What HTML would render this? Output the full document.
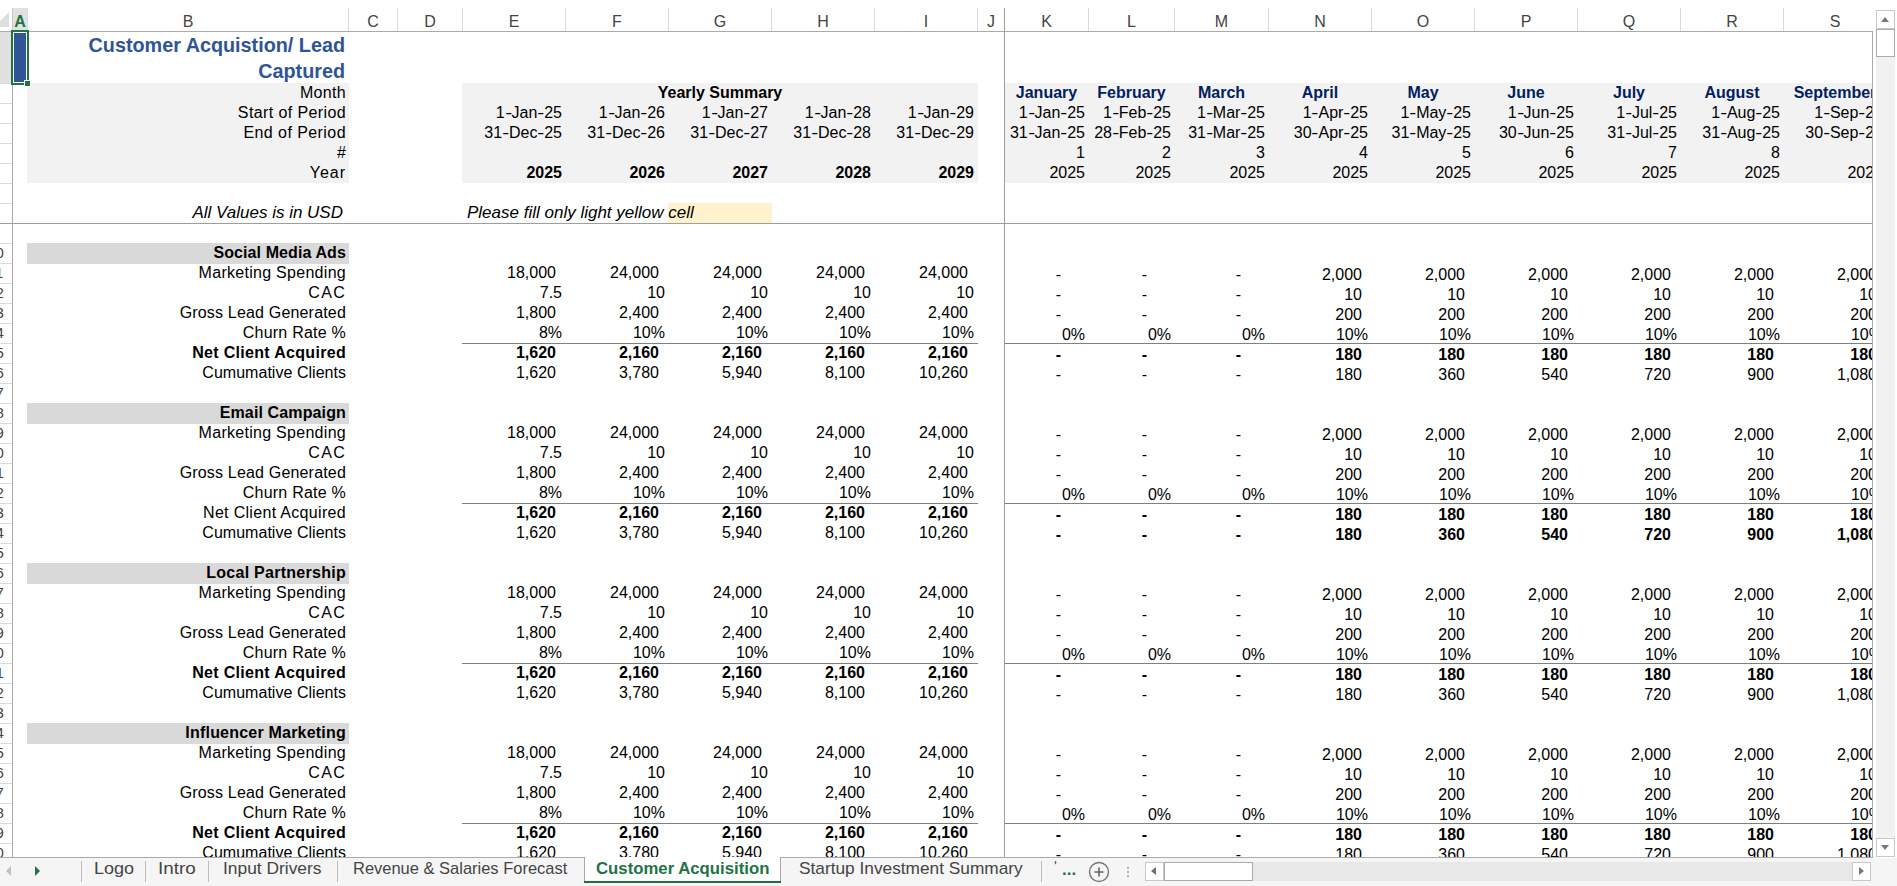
<!DOCTYPE html><html><head><meta charset="utf-8"><style>
html,body{margin:0;padding:0;}
body{width:1897px;height:886px;overflow:hidden;position:relative;background:#fff;font-family:"Liberation Sans", sans-serif;}
#grid{position:absolute;left:0;top:0;width:1872px;height:857px;overflow:hidden;}
</style></head><body><div id="grid">
<div style="position:absolute;left:27px;top:83px;width:322px;height:100px;background:#F2F2F2;"></div>
<div style="position:absolute;left:462px;top:83px;width:516px;height:100px;background:#F2F2F2;"></div>
<div style="position:absolute;left:1005px;top:83px;width:867px;height:100px;background:#F2F2F2;"></div>
<div style="position:absolute;left:27px;top:243px;width:322px;height:21px;background:#D9D9D9;"></div>
<div style="position:absolute;left:27px;top:403px;width:322px;height:21px;background:#D9D9D9;"></div>
<div style="position:absolute;left:27px;top:563px;width:322px;height:21px;background:#D9D9D9;"></div>
<div style="position:absolute;left:27px;top:723px;width:322px;height:21px;background:#D9D9D9;"></div>
<div style="position:absolute;left:668px;top:203px;width:104px;height:20px;background:#FFF2CC;"></div>
<div style="position:absolute;left:12px;top:31px;width:15px;height:52px;background:#2F5597;"></div>
<div style="position:absolute;left:27px;top:32px;width:321px;height:52px;text-align:right;padding-right:3px;box-sizing:border-box;font-size:19.8px;font-weight:bold;color:#2F5597;line-height:26px;">Customer Acquistion/ Lead<br>Captured</div>
<div style="position:absolute;left:-272px;top:83px;width:620px;height:20px;line-height:20px;text-align:right;padding-right:2px;box-sizing:border-box;font-size:16px;font-weight:normal;font-style:normal;color:#000;white-space:nowrap;letter-spacing:0.325px;">Month</div>
<div style="position:absolute;left:-272px;top:103px;width:620px;height:20px;line-height:20px;text-align:right;padding-right:2px;box-sizing:border-box;font-size:16px;font-weight:normal;font-style:normal;color:#000;white-space:nowrap;letter-spacing:0.393px;">Start of Period</div>
<div style="position:absolute;left:-272px;top:123px;width:620px;height:20px;line-height:20px;text-align:right;padding-right:2px;box-sizing:border-box;font-size:16px;font-weight:normal;font-style:normal;color:#000;white-space:nowrap;letter-spacing:0.433px;">End of Period</div>
<div style="position:absolute;left:-272px;top:143px;width:620px;height:20px;line-height:20px;text-align:right;padding-right:2px;box-sizing:border-box;font-size:16px;font-weight:normal;font-style:normal;color:#000;white-space:nowrap;letter-spacing:0px;">#</div>
<div style="position:absolute;left:-272px;top:163px;width:620px;height:20px;line-height:20px;text-align:right;padding-right:2px;box-sizing:border-box;font-size:16px;font-weight:normal;font-style:normal;color:#000;white-space:nowrap;letter-spacing:1.0px;">Year</div>
<div style="position:absolute;left:-273px;top:203px;width:621px;height:20px;line-height:20px;text-align:right;padding-right:5px;box-sizing:border-box;font-size:17px;font-weight:normal;font-style:italic;color:#000;white-space:nowrap;">All Values is in USD</div>
<div style="position:absolute;left:462px;top:83px;width:516px;height:20px;line-height:20px;text-align:center;box-sizing:border-box;font-size:16px;font-weight:bold;font-style:normal;color:#000;white-space:nowrap;">Yearly Summary</div>
<div style="position:absolute;left:163px;top:103px;width:402px;height:20px;line-height:20px;text-align:right;padding-right:3px;box-sizing:border-box;font-size:16px;font-weight:normal;font-style:normal;color:#000;white-space:nowrap;">1<span style="display:inline-block;width:6.83px;text-align:center"><span style="display:inline-block;transform:scaleX(1.3)">-</span></span>Jan<span style="display:inline-block;width:6.83px;text-align:center"><span style="display:inline-block;transform:scaleX(1.3)">-</span></span>25</div>
<div style="position:absolute;left:163px;top:123px;width:402px;height:20px;line-height:20px;text-align:right;padding-right:3px;box-sizing:border-box;font-size:16px;font-weight:normal;font-style:normal;color:#000;white-space:nowrap;">31<span style="display:inline-block;width:6.83px;text-align:center"><span style="display:inline-block;transform:scaleX(1.3)">-</span></span>Dec<span style="display:inline-block;width:6.83px;text-align:center"><span style="display:inline-block;transform:scaleX(1.3)">-</span></span>25</div>
<div style="position:absolute;left:163px;top:163px;width:402px;height:20px;line-height:20px;text-align:right;padding-right:3px;box-sizing:border-box;font-size:16px;font-weight:bold;font-style:normal;color:#000;white-space:nowrap;">2025</div>
<div style="position:absolute;left:266px;top:103px;width:402px;height:20px;line-height:20px;text-align:right;padding-right:3px;box-sizing:border-box;font-size:16px;font-weight:normal;font-style:normal;color:#000;white-space:nowrap;">1<span style="display:inline-block;width:6.83px;text-align:center"><span style="display:inline-block;transform:scaleX(1.3)">-</span></span>Jan<span style="display:inline-block;width:6.83px;text-align:center"><span style="display:inline-block;transform:scaleX(1.3)">-</span></span>26</div>
<div style="position:absolute;left:266px;top:123px;width:402px;height:20px;line-height:20px;text-align:right;padding-right:3px;box-sizing:border-box;font-size:16px;font-weight:normal;font-style:normal;color:#000;white-space:nowrap;">31<span style="display:inline-block;width:6.83px;text-align:center"><span style="display:inline-block;transform:scaleX(1.3)">-</span></span>Dec<span style="display:inline-block;width:6.83px;text-align:center"><span style="display:inline-block;transform:scaleX(1.3)">-</span></span>26</div>
<div style="position:absolute;left:266px;top:163px;width:402px;height:20px;line-height:20px;text-align:right;padding-right:3px;box-sizing:border-box;font-size:16px;font-weight:bold;font-style:normal;color:#000;white-space:nowrap;">2026</div>
<div style="position:absolute;left:369px;top:103px;width:402px;height:20px;line-height:20px;text-align:right;padding-right:3px;box-sizing:border-box;font-size:16px;font-weight:normal;font-style:normal;color:#000;white-space:nowrap;">1<span style="display:inline-block;width:6.83px;text-align:center"><span style="display:inline-block;transform:scaleX(1.3)">-</span></span>Jan<span style="display:inline-block;width:6.83px;text-align:center"><span style="display:inline-block;transform:scaleX(1.3)">-</span></span>27</div>
<div style="position:absolute;left:369px;top:123px;width:402px;height:20px;line-height:20px;text-align:right;padding-right:3px;box-sizing:border-box;font-size:16px;font-weight:normal;font-style:normal;color:#000;white-space:nowrap;">31<span style="display:inline-block;width:6.83px;text-align:center"><span style="display:inline-block;transform:scaleX(1.3)">-</span></span>Dec<span style="display:inline-block;width:6.83px;text-align:center"><span style="display:inline-block;transform:scaleX(1.3)">-</span></span>27</div>
<div style="position:absolute;left:369px;top:163px;width:402px;height:20px;line-height:20px;text-align:right;padding-right:3px;box-sizing:border-box;font-size:16px;font-weight:bold;font-style:normal;color:#000;white-space:nowrap;">2027</div>
<div style="position:absolute;left:472px;top:103px;width:402px;height:20px;line-height:20px;text-align:right;padding-right:3px;box-sizing:border-box;font-size:16px;font-weight:normal;font-style:normal;color:#000;white-space:nowrap;">1<span style="display:inline-block;width:6.83px;text-align:center"><span style="display:inline-block;transform:scaleX(1.3)">-</span></span>Jan<span style="display:inline-block;width:6.83px;text-align:center"><span style="display:inline-block;transform:scaleX(1.3)">-</span></span>28</div>
<div style="position:absolute;left:472px;top:123px;width:402px;height:20px;line-height:20px;text-align:right;padding-right:3px;box-sizing:border-box;font-size:16px;font-weight:normal;font-style:normal;color:#000;white-space:nowrap;">31<span style="display:inline-block;width:6.83px;text-align:center"><span style="display:inline-block;transform:scaleX(1.3)">-</span></span>Dec<span style="display:inline-block;width:6.83px;text-align:center"><span style="display:inline-block;transform:scaleX(1.3)">-</span></span>28</div>
<div style="position:absolute;left:472px;top:163px;width:402px;height:20px;line-height:20px;text-align:right;padding-right:3px;box-sizing:border-box;font-size:16px;font-weight:bold;font-style:normal;color:#000;white-space:nowrap;">2028</div>
<div style="position:absolute;left:575px;top:103px;width:402px;height:20px;line-height:20px;text-align:right;padding-right:3px;box-sizing:border-box;font-size:16px;font-weight:normal;font-style:normal;color:#000;white-space:nowrap;">1<span style="display:inline-block;width:6.83px;text-align:center"><span style="display:inline-block;transform:scaleX(1.3)">-</span></span>Jan<span style="display:inline-block;width:6.83px;text-align:center"><span style="display:inline-block;transform:scaleX(1.3)">-</span></span>29</div>
<div style="position:absolute;left:575px;top:123px;width:402px;height:20px;line-height:20px;text-align:right;padding-right:3px;box-sizing:border-box;font-size:16px;font-weight:normal;font-style:normal;color:#000;white-space:nowrap;">31<span style="display:inline-block;width:6.83px;text-align:center"><span style="display:inline-block;transform:scaleX(1.3)">-</span></span>Dec<span style="display:inline-block;width:6.83px;text-align:center"><span style="display:inline-block;transform:scaleX(1.3)">-</span></span>29</div>
<div style="position:absolute;left:575px;top:163px;width:402px;height:20px;line-height:20px;text-align:right;padding-right:3px;box-sizing:border-box;font-size:16px;font-weight:bold;font-style:normal;color:#000;white-space:nowrap;">2029</div>
<div style="position:absolute;left:463px;top:203px;width:400px;height:20px;line-height:20px;text-align:left;padding-left:4px;box-sizing:border-box;font-size:17px;font-weight:normal;font-style:italic;color:#000;white-space:nowrap;">Please fill only light yellow cell</div>
<div style="position:absolute;left:1005px;top:83px;width:83px;height:20px;line-height:20px;text-align:center;box-sizing:border-box;font-size:16px;font-weight:bold;font-style:normal;color:#002060;white-space:nowrap;">January</div>
<div style="position:absolute;left:705px;top:103px;width:383px;height:20px;line-height:20px;text-align:right;padding-right:3px;box-sizing:border-box;font-size:16px;font-weight:normal;font-style:normal;color:#000;white-space:nowrap;">1<span style="display:inline-block;width:6.83px;text-align:center"><span style="display:inline-block;transform:scaleX(1.3)">-</span></span>Jan<span style="display:inline-block;width:6.83px;text-align:center"><span style="display:inline-block;transform:scaleX(1.3)">-</span></span>25</div>
<div style="position:absolute;left:705px;top:123px;width:383px;height:20px;line-height:20px;text-align:right;padding-right:3px;box-sizing:border-box;font-size:16px;font-weight:normal;font-style:normal;color:#000;white-space:nowrap;">31<span style="display:inline-block;width:6.83px;text-align:center"><span style="display:inline-block;transform:scaleX(1.3)">-</span></span>Jan<span style="display:inline-block;width:6.83px;text-align:center"><span style="display:inline-block;transform:scaleX(1.3)">-</span></span>25</div>
<div style="position:absolute;left:705px;top:143px;width:383px;height:20px;line-height:20px;text-align:right;padding-right:3px;box-sizing:border-box;font-size:16px;font-weight:normal;font-style:normal;color:#000;white-space:nowrap;">1</div>
<div style="position:absolute;left:705px;top:163px;width:383px;height:20px;line-height:20px;text-align:right;padding-right:3px;box-sizing:border-box;font-size:16px;font-weight:normal;font-style:normal;color:#000;white-space:nowrap;">2025</div>
<div style="position:absolute;left:1089px;top:83px;width:85px;height:20px;line-height:20px;text-align:center;box-sizing:border-box;font-size:16px;font-weight:bold;font-style:normal;color:#002060;white-space:nowrap;">February</div>
<div style="position:absolute;left:789px;top:103px;width:385px;height:20px;line-height:20px;text-align:right;padding-right:3px;box-sizing:border-box;font-size:16px;font-weight:normal;font-style:normal;color:#000;white-space:nowrap;">1<span style="display:inline-block;width:6.83px;text-align:center"><span style="display:inline-block;transform:scaleX(1.3)">-</span></span>Feb<span style="display:inline-block;width:6.83px;text-align:center"><span style="display:inline-block;transform:scaleX(1.3)">-</span></span>25</div>
<div style="position:absolute;left:789px;top:123px;width:385px;height:20px;line-height:20px;text-align:right;padding-right:3px;box-sizing:border-box;font-size:16px;font-weight:normal;font-style:normal;color:#000;white-space:nowrap;">28<span style="display:inline-block;width:6.83px;text-align:center"><span style="display:inline-block;transform:scaleX(1.3)">-</span></span>Feb<span style="display:inline-block;width:6.83px;text-align:center"><span style="display:inline-block;transform:scaleX(1.3)">-</span></span>25</div>
<div style="position:absolute;left:789px;top:143px;width:385px;height:20px;line-height:20px;text-align:right;padding-right:3px;box-sizing:border-box;font-size:16px;font-weight:normal;font-style:normal;color:#000;white-space:nowrap;">2</div>
<div style="position:absolute;left:789px;top:163px;width:385px;height:20px;line-height:20px;text-align:right;padding-right:3px;box-sizing:border-box;font-size:16px;font-weight:normal;font-style:normal;color:#000;white-space:nowrap;">2025</div>
<div style="position:absolute;left:1175px;top:83px;width:93px;height:20px;line-height:20px;text-align:center;box-sizing:border-box;font-size:16px;font-weight:bold;font-style:normal;color:#002060;white-space:nowrap;">March</div>
<div style="position:absolute;left:875px;top:103px;width:393px;height:20px;line-height:20px;text-align:right;padding-right:3px;box-sizing:border-box;font-size:16px;font-weight:normal;font-style:normal;color:#000;white-space:nowrap;">1<span style="display:inline-block;width:6.83px;text-align:center"><span style="display:inline-block;transform:scaleX(1.3)">-</span></span>Mar<span style="display:inline-block;width:6.83px;text-align:center"><span style="display:inline-block;transform:scaleX(1.3)">-</span></span>25</div>
<div style="position:absolute;left:875px;top:123px;width:393px;height:20px;line-height:20px;text-align:right;padding-right:3px;box-sizing:border-box;font-size:16px;font-weight:normal;font-style:normal;color:#000;white-space:nowrap;">31<span style="display:inline-block;width:6.83px;text-align:center"><span style="display:inline-block;transform:scaleX(1.3)">-</span></span>Mar<span style="display:inline-block;width:6.83px;text-align:center"><span style="display:inline-block;transform:scaleX(1.3)">-</span></span>25</div>
<div style="position:absolute;left:875px;top:143px;width:393px;height:20px;line-height:20px;text-align:right;padding-right:3px;box-sizing:border-box;font-size:16px;font-weight:normal;font-style:normal;color:#000;white-space:nowrap;">3</div>
<div style="position:absolute;left:875px;top:163px;width:393px;height:20px;line-height:20px;text-align:right;padding-right:3px;box-sizing:border-box;font-size:16px;font-weight:normal;font-style:normal;color:#000;white-space:nowrap;">2025</div>
<div style="position:absolute;left:1269px;top:83px;width:102px;height:20px;line-height:20px;text-align:center;box-sizing:border-box;font-size:16px;font-weight:bold;font-style:normal;color:#002060;white-space:nowrap;">April</div>
<div style="position:absolute;left:969px;top:103px;width:402px;height:20px;line-height:20px;text-align:right;padding-right:3px;box-sizing:border-box;font-size:16px;font-weight:normal;font-style:normal;color:#000;white-space:nowrap;">1<span style="display:inline-block;width:6.83px;text-align:center"><span style="display:inline-block;transform:scaleX(1.3)">-</span></span>Apr<span style="display:inline-block;width:6.83px;text-align:center"><span style="display:inline-block;transform:scaleX(1.3)">-</span></span>25</div>
<div style="position:absolute;left:969px;top:123px;width:402px;height:20px;line-height:20px;text-align:right;padding-right:3px;box-sizing:border-box;font-size:16px;font-weight:normal;font-style:normal;color:#000;white-space:nowrap;">30<span style="display:inline-block;width:6.83px;text-align:center"><span style="display:inline-block;transform:scaleX(1.3)">-</span></span>Apr<span style="display:inline-block;width:6.83px;text-align:center"><span style="display:inline-block;transform:scaleX(1.3)">-</span></span>25</div>
<div style="position:absolute;left:969px;top:143px;width:402px;height:20px;line-height:20px;text-align:right;padding-right:3px;box-sizing:border-box;font-size:16px;font-weight:normal;font-style:normal;color:#000;white-space:nowrap;">4</div>
<div style="position:absolute;left:969px;top:163px;width:402px;height:20px;line-height:20px;text-align:right;padding-right:3px;box-sizing:border-box;font-size:16px;font-weight:normal;font-style:normal;color:#000;white-space:nowrap;">2025</div>
<div style="position:absolute;left:1372px;top:83px;width:102px;height:20px;line-height:20px;text-align:center;box-sizing:border-box;font-size:16px;font-weight:bold;font-style:normal;color:#002060;white-space:nowrap;">May</div>
<div style="position:absolute;left:1072px;top:103px;width:402px;height:20px;line-height:20px;text-align:right;padding-right:3px;box-sizing:border-box;font-size:16px;font-weight:normal;font-style:normal;color:#000;white-space:nowrap;">1<span style="display:inline-block;width:6.83px;text-align:center"><span style="display:inline-block;transform:scaleX(1.3)">-</span></span>May<span style="display:inline-block;width:6.83px;text-align:center"><span style="display:inline-block;transform:scaleX(1.3)">-</span></span>25</div>
<div style="position:absolute;left:1072px;top:123px;width:402px;height:20px;line-height:20px;text-align:right;padding-right:3px;box-sizing:border-box;font-size:16px;font-weight:normal;font-style:normal;color:#000;white-space:nowrap;">31<span style="display:inline-block;width:6.83px;text-align:center"><span style="display:inline-block;transform:scaleX(1.3)">-</span></span>May<span style="display:inline-block;width:6.83px;text-align:center"><span style="display:inline-block;transform:scaleX(1.3)">-</span></span>25</div>
<div style="position:absolute;left:1072px;top:143px;width:402px;height:20px;line-height:20px;text-align:right;padding-right:3px;box-sizing:border-box;font-size:16px;font-weight:normal;font-style:normal;color:#000;white-space:nowrap;">5</div>
<div style="position:absolute;left:1072px;top:163px;width:402px;height:20px;line-height:20px;text-align:right;padding-right:3px;box-sizing:border-box;font-size:16px;font-weight:normal;font-style:normal;color:#000;white-space:nowrap;">2025</div>
<div style="position:absolute;left:1475px;top:83px;width:102px;height:20px;line-height:20px;text-align:center;box-sizing:border-box;font-size:16px;font-weight:bold;font-style:normal;color:#002060;white-space:nowrap;">June</div>
<div style="position:absolute;left:1175px;top:103px;width:402px;height:20px;line-height:20px;text-align:right;padding-right:3px;box-sizing:border-box;font-size:16px;font-weight:normal;font-style:normal;color:#000;white-space:nowrap;">1<span style="display:inline-block;width:6.83px;text-align:center"><span style="display:inline-block;transform:scaleX(1.3)">-</span></span>Jun<span style="display:inline-block;width:6.83px;text-align:center"><span style="display:inline-block;transform:scaleX(1.3)">-</span></span>25</div>
<div style="position:absolute;left:1175px;top:123px;width:402px;height:20px;line-height:20px;text-align:right;padding-right:3px;box-sizing:border-box;font-size:16px;font-weight:normal;font-style:normal;color:#000;white-space:nowrap;">30<span style="display:inline-block;width:6.83px;text-align:center"><span style="display:inline-block;transform:scaleX(1.3)">-</span></span>Jun<span style="display:inline-block;width:6.83px;text-align:center"><span style="display:inline-block;transform:scaleX(1.3)">-</span></span>25</div>
<div style="position:absolute;left:1175px;top:143px;width:402px;height:20px;line-height:20px;text-align:right;padding-right:3px;box-sizing:border-box;font-size:16px;font-weight:normal;font-style:normal;color:#000;white-space:nowrap;">6</div>
<div style="position:absolute;left:1175px;top:163px;width:402px;height:20px;line-height:20px;text-align:right;padding-right:3px;box-sizing:border-box;font-size:16px;font-weight:normal;font-style:normal;color:#000;white-space:nowrap;">2025</div>
<div style="position:absolute;left:1578px;top:83px;width:102px;height:20px;line-height:20px;text-align:center;box-sizing:border-box;font-size:16px;font-weight:bold;font-style:normal;color:#002060;white-space:nowrap;">July</div>
<div style="position:absolute;left:1278px;top:103px;width:402px;height:20px;line-height:20px;text-align:right;padding-right:3px;box-sizing:border-box;font-size:16px;font-weight:normal;font-style:normal;color:#000;white-space:nowrap;">1<span style="display:inline-block;width:6.83px;text-align:center"><span style="display:inline-block;transform:scaleX(1.3)">-</span></span>Jul<span style="display:inline-block;width:6.83px;text-align:center"><span style="display:inline-block;transform:scaleX(1.3)">-</span></span>25</div>
<div style="position:absolute;left:1278px;top:123px;width:402px;height:20px;line-height:20px;text-align:right;padding-right:3px;box-sizing:border-box;font-size:16px;font-weight:normal;font-style:normal;color:#000;white-space:nowrap;">31<span style="display:inline-block;width:6.83px;text-align:center"><span style="display:inline-block;transform:scaleX(1.3)">-</span></span>Jul<span style="display:inline-block;width:6.83px;text-align:center"><span style="display:inline-block;transform:scaleX(1.3)">-</span></span>25</div>
<div style="position:absolute;left:1278px;top:143px;width:402px;height:20px;line-height:20px;text-align:right;padding-right:3px;box-sizing:border-box;font-size:16px;font-weight:normal;font-style:normal;color:#000;white-space:nowrap;">7</div>
<div style="position:absolute;left:1278px;top:163px;width:402px;height:20px;line-height:20px;text-align:right;padding-right:3px;box-sizing:border-box;font-size:16px;font-weight:normal;font-style:normal;color:#000;white-space:nowrap;">2025</div>
<div style="position:absolute;left:1681px;top:83px;width:102px;height:20px;line-height:20px;text-align:center;box-sizing:border-box;font-size:16px;font-weight:bold;font-style:normal;color:#002060;white-space:nowrap;">August</div>
<div style="position:absolute;left:1381px;top:103px;width:402px;height:20px;line-height:20px;text-align:right;padding-right:3px;box-sizing:border-box;font-size:16px;font-weight:normal;font-style:normal;color:#000;white-space:nowrap;">1<span style="display:inline-block;width:6.83px;text-align:center"><span style="display:inline-block;transform:scaleX(1.3)">-</span></span>Aug<span style="display:inline-block;width:6.83px;text-align:center"><span style="display:inline-block;transform:scaleX(1.3)">-</span></span>25</div>
<div style="position:absolute;left:1381px;top:123px;width:402px;height:20px;line-height:20px;text-align:right;padding-right:3px;box-sizing:border-box;font-size:16px;font-weight:normal;font-style:normal;color:#000;white-space:nowrap;">31<span style="display:inline-block;width:6.83px;text-align:center"><span style="display:inline-block;transform:scaleX(1.3)">-</span></span>Aug<span style="display:inline-block;width:6.83px;text-align:center"><span style="display:inline-block;transform:scaleX(1.3)">-</span></span>25</div>
<div style="position:absolute;left:1381px;top:143px;width:402px;height:20px;line-height:20px;text-align:right;padding-right:3px;box-sizing:border-box;font-size:16px;font-weight:normal;font-style:normal;color:#000;white-space:nowrap;">8</div>
<div style="position:absolute;left:1381px;top:163px;width:402px;height:20px;line-height:20px;text-align:right;padding-right:3px;box-sizing:border-box;font-size:16px;font-weight:normal;font-style:normal;color:#000;white-space:nowrap;">2025</div>
<div style="position:absolute;left:1784px;top:83px;width:102px;height:20px;line-height:20px;text-align:center;box-sizing:border-box;font-size:16px;font-weight:bold;font-style:normal;color:#002060;white-space:nowrap;">September</div>
<div style="position:absolute;left:1484px;top:103px;width:402px;height:20px;line-height:20px;text-align:right;padding-right:3px;box-sizing:border-box;font-size:16px;font-weight:normal;font-style:normal;color:#000;white-space:nowrap;">1<span style="display:inline-block;width:6.83px;text-align:center"><span style="display:inline-block;transform:scaleX(1.3)">-</span></span>Sep<span style="display:inline-block;width:6.83px;text-align:center"><span style="display:inline-block;transform:scaleX(1.3)">-</span></span>25</div>
<div style="position:absolute;left:1484px;top:123px;width:402px;height:20px;line-height:20px;text-align:right;padding-right:3px;box-sizing:border-box;font-size:16px;font-weight:normal;font-style:normal;color:#000;white-space:nowrap;">30<span style="display:inline-block;width:6.83px;text-align:center"><span style="display:inline-block;transform:scaleX(1.3)">-</span></span>Sep<span style="display:inline-block;width:6.83px;text-align:center"><span style="display:inline-block;transform:scaleX(1.3)">-</span></span>25</div>
<div style="position:absolute;left:1484px;top:143px;width:402px;height:20px;line-height:20px;text-align:right;padding-right:3px;box-sizing:border-box;font-size:16px;font-weight:normal;font-style:normal;color:#000;white-space:nowrap;">9</div>
<div style="position:absolute;left:1484px;top:163px;width:402px;height:20px;line-height:20px;text-align:right;padding-right:3px;box-sizing:border-box;font-size:16px;font-weight:normal;font-style:normal;color:#000;white-space:nowrap;">2025</div>
<div style="position:absolute;left:-272px;top:243px;width:620px;height:20px;line-height:20px;text-align:right;padding-right:2px;box-sizing:border-box;font-size:16px;font-weight:bold;font-style:normal;color:#000;white-space:nowrap;letter-spacing:0.1px;">Social Media Ads</div>
<div style="position:absolute;left:-272px;top:263px;width:620px;height:20px;line-height:20px;text-align:right;padding-right:2px;box-sizing:border-box;font-size:16px;font-weight:normal;font-style:normal;color:#000;white-space:nowrap;letter-spacing:0.282px;">Marketing Spending</div>
<div style="position:absolute;left:-272px;top:283px;width:620px;height:20px;line-height:20px;text-align:right;padding-right:2px;box-sizing:border-box;font-size:16px;font-weight:normal;font-style:normal;color:#000;white-space:nowrap;letter-spacing:1.3px;">CAC</div>
<div style="position:absolute;left:-272px;top:303px;width:620px;height:20px;line-height:20px;text-align:right;padding-right:2px;box-sizing:border-box;font-size:16px;font-weight:normal;font-style:normal;color:#000;white-space:nowrap;letter-spacing:0.179px;">Gross Lead Generated</div>
<div style="position:absolute;left:-272px;top:323px;width:620px;height:20px;line-height:20px;text-align:right;padding-right:2px;box-sizing:border-box;font-size:16px;font-weight:normal;font-style:normal;color:#000;white-space:nowrap;letter-spacing:0.227px;">Churn Rate %</div>
<div style="position:absolute;left:-272px;top:343px;width:620px;height:20px;line-height:20px;text-align:right;padding-right:2px;box-sizing:border-box;font-size:16px;font-weight:bold;font-style:normal;color:#000;white-space:nowrap;letter-spacing:0.311px;">Net Client Acquired</div>
<div style="position:absolute;left:-272px;top:363px;width:620px;height:20px;line-height:20px;text-align:right;padding-right:2px;box-sizing:border-box;font-size:16px;font-weight:normal;font-style:normal;color:#000;white-space:nowrap;letter-spacing:0.029px;">Cumumative Clients</div>
<div style="position:absolute;left:163px;top:263px;width:402px;height:20px;line-height:20px;text-align:right;padding-right:9px;box-sizing:border-box;font-size:16px;font-weight:normal;font-style:normal;color:#000;white-space:nowrap;">18,000</div>
<div style="position:absolute;left:163px;top:283px;width:402px;height:20px;line-height:20px;text-align:right;padding-right:3px;box-sizing:border-box;font-size:16px;font-weight:normal;font-style:normal;color:#000;white-space:nowrap;">7.5</div>
<div style="position:absolute;left:163px;top:303px;width:402px;height:20px;line-height:20px;text-align:right;padding-right:9px;box-sizing:border-box;font-size:16px;font-weight:normal;font-style:normal;color:#000;white-space:nowrap;">1,800</div>
<div style="position:absolute;left:163px;top:323px;width:402px;height:20px;line-height:20px;text-align:right;padding-right:3px;box-sizing:border-box;font-size:16px;font-weight:normal;font-style:normal;color:#000;white-space:nowrap;">8%</div>
<div style="position:absolute;left:163px;top:343px;width:402px;height:20px;line-height:20px;text-align:right;padding-right:9px;box-sizing:border-box;font-size:16px;font-weight:bold;font-style:normal;color:#000;white-space:nowrap;">1,620</div>
<div style="position:absolute;left:163px;top:363px;width:402px;height:20px;line-height:20px;text-align:right;padding-right:9px;box-sizing:border-box;font-size:16px;font-weight:normal;font-style:normal;color:#000;white-space:nowrap;">1,620</div>
<div style="position:absolute;left:266px;top:263px;width:402px;height:20px;line-height:20px;text-align:right;padding-right:9px;box-sizing:border-box;font-size:16px;font-weight:normal;font-style:normal;color:#000;white-space:nowrap;">24,000</div>
<div style="position:absolute;left:266px;top:283px;width:402px;height:20px;line-height:20px;text-align:right;padding-right:3px;box-sizing:border-box;font-size:16px;font-weight:normal;font-style:normal;color:#000;white-space:nowrap;">10</div>
<div style="position:absolute;left:266px;top:303px;width:402px;height:20px;line-height:20px;text-align:right;padding-right:9px;box-sizing:border-box;font-size:16px;font-weight:normal;font-style:normal;color:#000;white-space:nowrap;">2,400</div>
<div style="position:absolute;left:266px;top:323px;width:402px;height:20px;line-height:20px;text-align:right;padding-right:3px;box-sizing:border-box;font-size:16px;font-weight:normal;font-style:normal;color:#000;white-space:nowrap;">10%</div>
<div style="position:absolute;left:266px;top:343px;width:402px;height:20px;line-height:20px;text-align:right;padding-right:9px;box-sizing:border-box;font-size:16px;font-weight:bold;font-style:normal;color:#000;white-space:nowrap;">2,160</div>
<div style="position:absolute;left:266px;top:363px;width:402px;height:20px;line-height:20px;text-align:right;padding-right:9px;box-sizing:border-box;font-size:16px;font-weight:normal;font-style:normal;color:#000;white-space:nowrap;">3,780</div>
<div style="position:absolute;left:369px;top:263px;width:402px;height:20px;line-height:20px;text-align:right;padding-right:9px;box-sizing:border-box;font-size:16px;font-weight:normal;font-style:normal;color:#000;white-space:nowrap;">24,000</div>
<div style="position:absolute;left:369px;top:283px;width:402px;height:20px;line-height:20px;text-align:right;padding-right:3px;box-sizing:border-box;font-size:16px;font-weight:normal;font-style:normal;color:#000;white-space:nowrap;">10</div>
<div style="position:absolute;left:369px;top:303px;width:402px;height:20px;line-height:20px;text-align:right;padding-right:9px;box-sizing:border-box;font-size:16px;font-weight:normal;font-style:normal;color:#000;white-space:nowrap;">2,400</div>
<div style="position:absolute;left:369px;top:323px;width:402px;height:20px;line-height:20px;text-align:right;padding-right:3px;box-sizing:border-box;font-size:16px;font-weight:normal;font-style:normal;color:#000;white-space:nowrap;">10%</div>
<div style="position:absolute;left:369px;top:343px;width:402px;height:20px;line-height:20px;text-align:right;padding-right:9px;box-sizing:border-box;font-size:16px;font-weight:bold;font-style:normal;color:#000;white-space:nowrap;">2,160</div>
<div style="position:absolute;left:369px;top:363px;width:402px;height:20px;line-height:20px;text-align:right;padding-right:9px;box-sizing:border-box;font-size:16px;font-weight:normal;font-style:normal;color:#000;white-space:nowrap;">5,940</div>
<div style="position:absolute;left:472px;top:263px;width:402px;height:20px;line-height:20px;text-align:right;padding-right:9px;box-sizing:border-box;font-size:16px;font-weight:normal;font-style:normal;color:#000;white-space:nowrap;">24,000</div>
<div style="position:absolute;left:472px;top:283px;width:402px;height:20px;line-height:20px;text-align:right;padding-right:3px;box-sizing:border-box;font-size:16px;font-weight:normal;font-style:normal;color:#000;white-space:nowrap;">10</div>
<div style="position:absolute;left:472px;top:303px;width:402px;height:20px;line-height:20px;text-align:right;padding-right:9px;box-sizing:border-box;font-size:16px;font-weight:normal;font-style:normal;color:#000;white-space:nowrap;">2,400</div>
<div style="position:absolute;left:472px;top:323px;width:402px;height:20px;line-height:20px;text-align:right;padding-right:3px;box-sizing:border-box;font-size:16px;font-weight:normal;font-style:normal;color:#000;white-space:nowrap;">10%</div>
<div style="position:absolute;left:472px;top:343px;width:402px;height:20px;line-height:20px;text-align:right;padding-right:9px;box-sizing:border-box;font-size:16px;font-weight:bold;font-style:normal;color:#000;white-space:nowrap;">2,160</div>
<div style="position:absolute;left:472px;top:363px;width:402px;height:20px;line-height:20px;text-align:right;padding-right:9px;box-sizing:border-box;font-size:16px;font-weight:normal;font-style:normal;color:#000;white-space:nowrap;">8,100</div>
<div style="position:absolute;left:575px;top:263px;width:402px;height:20px;line-height:20px;text-align:right;padding-right:9px;box-sizing:border-box;font-size:16px;font-weight:normal;font-style:normal;color:#000;white-space:nowrap;">24,000</div>
<div style="position:absolute;left:575px;top:283px;width:402px;height:20px;line-height:20px;text-align:right;padding-right:3px;box-sizing:border-box;font-size:16px;font-weight:normal;font-style:normal;color:#000;white-space:nowrap;">10</div>
<div style="position:absolute;left:575px;top:303px;width:402px;height:20px;line-height:20px;text-align:right;padding-right:9px;box-sizing:border-box;font-size:16px;font-weight:normal;font-style:normal;color:#000;white-space:nowrap;">2,400</div>
<div style="position:absolute;left:575px;top:323px;width:402px;height:20px;line-height:20px;text-align:right;padding-right:3px;box-sizing:border-box;font-size:16px;font-weight:normal;font-style:normal;color:#000;white-space:nowrap;">10%</div>
<div style="position:absolute;left:575px;top:343px;width:402px;height:20px;line-height:20px;text-align:right;padding-right:9px;box-sizing:border-box;font-size:16px;font-weight:bold;font-style:normal;color:#000;white-space:nowrap;">2,160</div>
<div style="position:absolute;left:575px;top:363px;width:402px;height:20px;line-height:20px;text-align:right;padding-right:9px;box-sizing:border-box;font-size:16px;font-weight:normal;font-style:normal;color:#000;white-space:nowrap;">10,260</div>
<div style="position:absolute;left:462px;top:343px;width:516px;height:1px;background:#808080;"></div>
<div style="position:absolute;left:1005px;top:343px;width:867px;height:1px;background:#808080;"></div>
<div style="position:absolute;left:705px;top:265px;width:383px;height:20px;line-height:20px;text-align:right;padding-right:27px;box-sizing:border-box;font-size:16px;font-weight:normal;font-style:normal;color:#000;white-space:nowrap;">-</div>
<div style="position:absolute;left:705px;top:285px;width:383px;height:20px;line-height:20px;text-align:right;padding-right:27px;box-sizing:border-box;font-size:16px;font-weight:normal;font-style:normal;color:#000;white-space:nowrap;">-</div>
<div style="position:absolute;left:705px;top:305px;width:383px;height:20px;line-height:20px;text-align:right;padding-right:27px;box-sizing:border-box;font-size:16px;font-weight:normal;font-style:normal;color:#000;white-space:nowrap;">-</div>
<div style="position:absolute;left:705px;top:325px;width:383px;height:20px;line-height:20px;text-align:right;padding-right:3px;box-sizing:border-box;font-size:16px;font-weight:normal;font-style:normal;color:#000;white-space:nowrap;">0%</div>
<div style="position:absolute;left:705px;top:345px;width:383px;height:20px;line-height:20px;text-align:right;padding-right:27px;box-sizing:border-box;font-size:16px;font-weight:bold;font-style:normal;color:#000;white-space:nowrap;">-</div>
<div style="position:absolute;left:705px;top:365px;width:383px;height:20px;line-height:20px;text-align:right;padding-right:27px;box-sizing:border-box;font-size:16px;font-weight:normal;font-style:normal;color:#000;white-space:nowrap;">-</div>
<div style="position:absolute;left:789px;top:265px;width:385px;height:20px;line-height:20px;text-align:right;padding-right:27px;box-sizing:border-box;font-size:16px;font-weight:normal;font-style:normal;color:#000;white-space:nowrap;">-</div>
<div style="position:absolute;left:789px;top:285px;width:385px;height:20px;line-height:20px;text-align:right;padding-right:27px;box-sizing:border-box;font-size:16px;font-weight:normal;font-style:normal;color:#000;white-space:nowrap;">-</div>
<div style="position:absolute;left:789px;top:305px;width:385px;height:20px;line-height:20px;text-align:right;padding-right:27px;box-sizing:border-box;font-size:16px;font-weight:normal;font-style:normal;color:#000;white-space:nowrap;">-</div>
<div style="position:absolute;left:789px;top:325px;width:385px;height:20px;line-height:20px;text-align:right;padding-right:3px;box-sizing:border-box;font-size:16px;font-weight:normal;font-style:normal;color:#000;white-space:nowrap;">0%</div>
<div style="position:absolute;left:789px;top:345px;width:385px;height:20px;line-height:20px;text-align:right;padding-right:27px;box-sizing:border-box;font-size:16px;font-weight:bold;font-style:normal;color:#000;white-space:nowrap;">-</div>
<div style="position:absolute;left:789px;top:365px;width:385px;height:20px;line-height:20px;text-align:right;padding-right:27px;box-sizing:border-box;font-size:16px;font-weight:normal;font-style:normal;color:#000;white-space:nowrap;">-</div>
<div style="position:absolute;left:875px;top:265px;width:393px;height:20px;line-height:20px;text-align:right;padding-right:27px;box-sizing:border-box;font-size:16px;font-weight:normal;font-style:normal;color:#000;white-space:nowrap;">-</div>
<div style="position:absolute;left:875px;top:285px;width:393px;height:20px;line-height:20px;text-align:right;padding-right:27px;box-sizing:border-box;font-size:16px;font-weight:normal;font-style:normal;color:#000;white-space:nowrap;">-</div>
<div style="position:absolute;left:875px;top:305px;width:393px;height:20px;line-height:20px;text-align:right;padding-right:27px;box-sizing:border-box;font-size:16px;font-weight:normal;font-style:normal;color:#000;white-space:nowrap;">-</div>
<div style="position:absolute;left:875px;top:325px;width:393px;height:20px;line-height:20px;text-align:right;padding-right:3px;box-sizing:border-box;font-size:16px;font-weight:normal;font-style:normal;color:#000;white-space:nowrap;">0%</div>
<div style="position:absolute;left:875px;top:345px;width:393px;height:20px;line-height:20px;text-align:right;padding-right:27px;box-sizing:border-box;font-size:16px;font-weight:bold;font-style:normal;color:#000;white-space:nowrap;">-</div>
<div style="position:absolute;left:875px;top:365px;width:393px;height:20px;line-height:20px;text-align:right;padding-right:27px;box-sizing:border-box;font-size:16px;font-weight:normal;font-style:normal;color:#000;white-space:nowrap;">-</div>
<div style="position:absolute;left:969px;top:265px;width:402px;height:20px;line-height:20px;text-align:right;padding-right:9px;box-sizing:border-box;font-size:16px;font-weight:normal;font-style:normal;color:#000;white-space:nowrap;">2,000</div>
<div style="position:absolute;left:969px;top:285px;width:402px;height:20px;line-height:20px;text-align:right;padding-right:9px;box-sizing:border-box;font-size:16px;font-weight:normal;font-style:normal;color:#000;white-space:nowrap;">10</div>
<div style="position:absolute;left:969px;top:305px;width:402px;height:20px;line-height:20px;text-align:right;padding-right:9px;box-sizing:border-box;font-size:16px;font-weight:normal;font-style:normal;color:#000;white-space:nowrap;">200</div>
<div style="position:absolute;left:969px;top:325px;width:402px;height:20px;line-height:20px;text-align:right;padding-right:3px;box-sizing:border-box;font-size:16px;font-weight:normal;font-style:normal;color:#000;white-space:nowrap;">10%</div>
<div style="position:absolute;left:969px;top:345px;width:402px;height:20px;line-height:20px;text-align:right;padding-right:9px;box-sizing:border-box;font-size:16px;font-weight:bold;font-style:normal;color:#000;white-space:nowrap;">180</div>
<div style="position:absolute;left:969px;top:365px;width:402px;height:20px;line-height:20px;text-align:right;padding-right:9px;box-sizing:border-box;font-size:16px;font-weight:normal;font-style:normal;color:#000;white-space:nowrap;">180</div>
<div style="position:absolute;left:1072px;top:265px;width:402px;height:20px;line-height:20px;text-align:right;padding-right:9px;box-sizing:border-box;font-size:16px;font-weight:normal;font-style:normal;color:#000;white-space:nowrap;">2,000</div>
<div style="position:absolute;left:1072px;top:285px;width:402px;height:20px;line-height:20px;text-align:right;padding-right:9px;box-sizing:border-box;font-size:16px;font-weight:normal;font-style:normal;color:#000;white-space:nowrap;">10</div>
<div style="position:absolute;left:1072px;top:305px;width:402px;height:20px;line-height:20px;text-align:right;padding-right:9px;box-sizing:border-box;font-size:16px;font-weight:normal;font-style:normal;color:#000;white-space:nowrap;">200</div>
<div style="position:absolute;left:1072px;top:325px;width:402px;height:20px;line-height:20px;text-align:right;padding-right:3px;box-sizing:border-box;font-size:16px;font-weight:normal;font-style:normal;color:#000;white-space:nowrap;">10%</div>
<div style="position:absolute;left:1072px;top:345px;width:402px;height:20px;line-height:20px;text-align:right;padding-right:9px;box-sizing:border-box;font-size:16px;font-weight:bold;font-style:normal;color:#000;white-space:nowrap;">180</div>
<div style="position:absolute;left:1072px;top:365px;width:402px;height:20px;line-height:20px;text-align:right;padding-right:9px;box-sizing:border-box;font-size:16px;font-weight:normal;font-style:normal;color:#000;white-space:nowrap;">360</div>
<div style="position:absolute;left:1175px;top:265px;width:402px;height:20px;line-height:20px;text-align:right;padding-right:9px;box-sizing:border-box;font-size:16px;font-weight:normal;font-style:normal;color:#000;white-space:nowrap;">2,000</div>
<div style="position:absolute;left:1175px;top:285px;width:402px;height:20px;line-height:20px;text-align:right;padding-right:9px;box-sizing:border-box;font-size:16px;font-weight:normal;font-style:normal;color:#000;white-space:nowrap;">10</div>
<div style="position:absolute;left:1175px;top:305px;width:402px;height:20px;line-height:20px;text-align:right;padding-right:9px;box-sizing:border-box;font-size:16px;font-weight:normal;font-style:normal;color:#000;white-space:nowrap;">200</div>
<div style="position:absolute;left:1175px;top:325px;width:402px;height:20px;line-height:20px;text-align:right;padding-right:3px;box-sizing:border-box;font-size:16px;font-weight:normal;font-style:normal;color:#000;white-space:nowrap;">10%</div>
<div style="position:absolute;left:1175px;top:345px;width:402px;height:20px;line-height:20px;text-align:right;padding-right:9px;box-sizing:border-box;font-size:16px;font-weight:bold;font-style:normal;color:#000;white-space:nowrap;">180</div>
<div style="position:absolute;left:1175px;top:365px;width:402px;height:20px;line-height:20px;text-align:right;padding-right:9px;box-sizing:border-box;font-size:16px;font-weight:normal;font-style:normal;color:#000;white-space:nowrap;">540</div>
<div style="position:absolute;left:1278px;top:265px;width:402px;height:20px;line-height:20px;text-align:right;padding-right:9px;box-sizing:border-box;font-size:16px;font-weight:normal;font-style:normal;color:#000;white-space:nowrap;">2,000</div>
<div style="position:absolute;left:1278px;top:285px;width:402px;height:20px;line-height:20px;text-align:right;padding-right:9px;box-sizing:border-box;font-size:16px;font-weight:normal;font-style:normal;color:#000;white-space:nowrap;">10</div>
<div style="position:absolute;left:1278px;top:305px;width:402px;height:20px;line-height:20px;text-align:right;padding-right:9px;box-sizing:border-box;font-size:16px;font-weight:normal;font-style:normal;color:#000;white-space:nowrap;">200</div>
<div style="position:absolute;left:1278px;top:325px;width:402px;height:20px;line-height:20px;text-align:right;padding-right:3px;box-sizing:border-box;font-size:16px;font-weight:normal;font-style:normal;color:#000;white-space:nowrap;">10%</div>
<div style="position:absolute;left:1278px;top:345px;width:402px;height:20px;line-height:20px;text-align:right;padding-right:9px;box-sizing:border-box;font-size:16px;font-weight:bold;font-style:normal;color:#000;white-space:nowrap;">180</div>
<div style="position:absolute;left:1278px;top:365px;width:402px;height:20px;line-height:20px;text-align:right;padding-right:9px;box-sizing:border-box;font-size:16px;font-weight:normal;font-style:normal;color:#000;white-space:nowrap;">720</div>
<div style="position:absolute;left:1381px;top:265px;width:402px;height:20px;line-height:20px;text-align:right;padding-right:9px;box-sizing:border-box;font-size:16px;font-weight:normal;font-style:normal;color:#000;white-space:nowrap;">2,000</div>
<div style="position:absolute;left:1381px;top:285px;width:402px;height:20px;line-height:20px;text-align:right;padding-right:9px;box-sizing:border-box;font-size:16px;font-weight:normal;font-style:normal;color:#000;white-space:nowrap;">10</div>
<div style="position:absolute;left:1381px;top:305px;width:402px;height:20px;line-height:20px;text-align:right;padding-right:9px;box-sizing:border-box;font-size:16px;font-weight:normal;font-style:normal;color:#000;white-space:nowrap;">200</div>
<div style="position:absolute;left:1381px;top:325px;width:402px;height:20px;line-height:20px;text-align:right;padding-right:3px;box-sizing:border-box;font-size:16px;font-weight:normal;font-style:normal;color:#000;white-space:nowrap;">10%</div>
<div style="position:absolute;left:1381px;top:345px;width:402px;height:20px;line-height:20px;text-align:right;padding-right:9px;box-sizing:border-box;font-size:16px;font-weight:bold;font-style:normal;color:#000;white-space:nowrap;">180</div>
<div style="position:absolute;left:1381px;top:365px;width:402px;height:20px;line-height:20px;text-align:right;padding-right:9px;box-sizing:border-box;font-size:16px;font-weight:normal;font-style:normal;color:#000;white-space:nowrap;">900</div>
<div style="position:absolute;left:1484px;top:265px;width:402px;height:20px;line-height:20px;text-align:right;padding-right:9px;box-sizing:border-box;font-size:16px;font-weight:normal;font-style:normal;color:#000;white-space:nowrap;">2,000</div>
<div style="position:absolute;left:1484px;top:285px;width:402px;height:20px;line-height:20px;text-align:right;padding-right:9px;box-sizing:border-box;font-size:16px;font-weight:normal;font-style:normal;color:#000;white-space:nowrap;">10</div>
<div style="position:absolute;left:1484px;top:305px;width:402px;height:20px;line-height:20px;text-align:right;padding-right:9px;box-sizing:border-box;font-size:16px;font-weight:normal;font-style:normal;color:#000;white-space:nowrap;">200</div>
<div style="position:absolute;left:1484px;top:325px;width:402px;height:20px;line-height:20px;text-align:right;padding-right:3px;box-sizing:border-box;font-size:16px;font-weight:normal;font-style:normal;color:#000;white-space:nowrap;">10%</div>
<div style="position:absolute;left:1484px;top:345px;width:402px;height:20px;line-height:20px;text-align:right;padding-right:9px;box-sizing:border-box;font-size:16px;font-weight:bold;font-style:normal;color:#000;white-space:nowrap;">180</div>
<div style="position:absolute;left:1484px;top:365px;width:402px;height:20px;line-height:20px;text-align:right;padding-right:9px;box-sizing:border-box;font-size:16px;font-weight:normal;font-style:normal;color:#000;white-space:nowrap;">1,080</div>
<div style="position:absolute;left:-272px;top:403px;width:620px;height:20px;line-height:20px;text-align:right;padding-right:2px;box-sizing:border-box;font-size:16px;font-weight:bold;font-style:normal;color:#000;white-space:nowrap;letter-spacing:0.131px;">Email Campaign</div>
<div style="position:absolute;left:-272px;top:423px;width:620px;height:20px;line-height:20px;text-align:right;padding-right:2px;box-sizing:border-box;font-size:16px;font-weight:normal;font-style:normal;color:#000;white-space:nowrap;letter-spacing:0.282px;">Marketing Spending</div>
<div style="position:absolute;left:-272px;top:443px;width:620px;height:20px;line-height:20px;text-align:right;padding-right:2px;box-sizing:border-box;font-size:16px;font-weight:normal;font-style:normal;color:#000;white-space:nowrap;letter-spacing:1.3px;">CAC</div>
<div style="position:absolute;left:-272px;top:463px;width:620px;height:20px;line-height:20px;text-align:right;padding-right:2px;box-sizing:border-box;font-size:16px;font-weight:normal;font-style:normal;color:#000;white-space:nowrap;letter-spacing:0.179px;">Gross Lead Generated</div>
<div style="position:absolute;left:-272px;top:483px;width:620px;height:20px;line-height:20px;text-align:right;padding-right:2px;box-sizing:border-box;font-size:16px;font-weight:normal;font-style:normal;color:#000;white-space:nowrap;letter-spacing:0.227px;">Churn Rate %</div>
<div style="position:absolute;left:-272px;top:503px;width:620px;height:20px;line-height:20px;text-align:right;padding-right:2px;box-sizing:border-box;font-size:16px;font-weight:normal;font-style:normal;color:#000;white-space:nowrap;letter-spacing:0.317px;">Net Client Acquired</div>
<div style="position:absolute;left:-272px;top:523px;width:620px;height:20px;line-height:20px;text-align:right;padding-right:2px;box-sizing:border-box;font-size:16px;font-weight:normal;font-style:normal;color:#000;white-space:nowrap;letter-spacing:0.029px;">Cumumative Clients</div>
<div style="position:absolute;left:163px;top:423px;width:402px;height:20px;line-height:20px;text-align:right;padding-right:9px;box-sizing:border-box;font-size:16px;font-weight:normal;font-style:normal;color:#000;white-space:nowrap;">18,000</div>
<div style="position:absolute;left:163px;top:443px;width:402px;height:20px;line-height:20px;text-align:right;padding-right:3px;box-sizing:border-box;font-size:16px;font-weight:normal;font-style:normal;color:#000;white-space:nowrap;">7.5</div>
<div style="position:absolute;left:163px;top:463px;width:402px;height:20px;line-height:20px;text-align:right;padding-right:9px;box-sizing:border-box;font-size:16px;font-weight:normal;font-style:normal;color:#000;white-space:nowrap;">1,800</div>
<div style="position:absolute;left:163px;top:483px;width:402px;height:20px;line-height:20px;text-align:right;padding-right:3px;box-sizing:border-box;font-size:16px;font-weight:normal;font-style:normal;color:#000;white-space:nowrap;">8%</div>
<div style="position:absolute;left:163px;top:503px;width:402px;height:20px;line-height:20px;text-align:right;padding-right:9px;box-sizing:border-box;font-size:16px;font-weight:bold;font-style:normal;color:#000;white-space:nowrap;">1,620</div>
<div style="position:absolute;left:163px;top:523px;width:402px;height:20px;line-height:20px;text-align:right;padding-right:9px;box-sizing:border-box;font-size:16px;font-weight:normal;font-style:normal;color:#000;white-space:nowrap;">1,620</div>
<div style="position:absolute;left:266px;top:423px;width:402px;height:20px;line-height:20px;text-align:right;padding-right:9px;box-sizing:border-box;font-size:16px;font-weight:normal;font-style:normal;color:#000;white-space:nowrap;">24,000</div>
<div style="position:absolute;left:266px;top:443px;width:402px;height:20px;line-height:20px;text-align:right;padding-right:3px;box-sizing:border-box;font-size:16px;font-weight:normal;font-style:normal;color:#000;white-space:nowrap;">10</div>
<div style="position:absolute;left:266px;top:463px;width:402px;height:20px;line-height:20px;text-align:right;padding-right:9px;box-sizing:border-box;font-size:16px;font-weight:normal;font-style:normal;color:#000;white-space:nowrap;">2,400</div>
<div style="position:absolute;left:266px;top:483px;width:402px;height:20px;line-height:20px;text-align:right;padding-right:3px;box-sizing:border-box;font-size:16px;font-weight:normal;font-style:normal;color:#000;white-space:nowrap;">10%</div>
<div style="position:absolute;left:266px;top:503px;width:402px;height:20px;line-height:20px;text-align:right;padding-right:9px;box-sizing:border-box;font-size:16px;font-weight:bold;font-style:normal;color:#000;white-space:nowrap;">2,160</div>
<div style="position:absolute;left:266px;top:523px;width:402px;height:20px;line-height:20px;text-align:right;padding-right:9px;box-sizing:border-box;font-size:16px;font-weight:normal;font-style:normal;color:#000;white-space:nowrap;">3,780</div>
<div style="position:absolute;left:369px;top:423px;width:402px;height:20px;line-height:20px;text-align:right;padding-right:9px;box-sizing:border-box;font-size:16px;font-weight:normal;font-style:normal;color:#000;white-space:nowrap;">24,000</div>
<div style="position:absolute;left:369px;top:443px;width:402px;height:20px;line-height:20px;text-align:right;padding-right:3px;box-sizing:border-box;font-size:16px;font-weight:normal;font-style:normal;color:#000;white-space:nowrap;">10</div>
<div style="position:absolute;left:369px;top:463px;width:402px;height:20px;line-height:20px;text-align:right;padding-right:9px;box-sizing:border-box;font-size:16px;font-weight:normal;font-style:normal;color:#000;white-space:nowrap;">2,400</div>
<div style="position:absolute;left:369px;top:483px;width:402px;height:20px;line-height:20px;text-align:right;padding-right:3px;box-sizing:border-box;font-size:16px;font-weight:normal;font-style:normal;color:#000;white-space:nowrap;">10%</div>
<div style="position:absolute;left:369px;top:503px;width:402px;height:20px;line-height:20px;text-align:right;padding-right:9px;box-sizing:border-box;font-size:16px;font-weight:bold;font-style:normal;color:#000;white-space:nowrap;">2,160</div>
<div style="position:absolute;left:369px;top:523px;width:402px;height:20px;line-height:20px;text-align:right;padding-right:9px;box-sizing:border-box;font-size:16px;font-weight:normal;font-style:normal;color:#000;white-space:nowrap;">5,940</div>
<div style="position:absolute;left:472px;top:423px;width:402px;height:20px;line-height:20px;text-align:right;padding-right:9px;box-sizing:border-box;font-size:16px;font-weight:normal;font-style:normal;color:#000;white-space:nowrap;">24,000</div>
<div style="position:absolute;left:472px;top:443px;width:402px;height:20px;line-height:20px;text-align:right;padding-right:3px;box-sizing:border-box;font-size:16px;font-weight:normal;font-style:normal;color:#000;white-space:nowrap;">10</div>
<div style="position:absolute;left:472px;top:463px;width:402px;height:20px;line-height:20px;text-align:right;padding-right:9px;box-sizing:border-box;font-size:16px;font-weight:normal;font-style:normal;color:#000;white-space:nowrap;">2,400</div>
<div style="position:absolute;left:472px;top:483px;width:402px;height:20px;line-height:20px;text-align:right;padding-right:3px;box-sizing:border-box;font-size:16px;font-weight:normal;font-style:normal;color:#000;white-space:nowrap;">10%</div>
<div style="position:absolute;left:472px;top:503px;width:402px;height:20px;line-height:20px;text-align:right;padding-right:9px;box-sizing:border-box;font-size:16px;font-weight:bold;font-style:normal;color:#000;white-space:nowrap;">2,160</div>
<div style="position:absolute;left:472px;top:523px;width:402px;height:20px;line-height:20px;text-align:right;padding-right:9px;box-sizing:border-box;font-size:16px;font-weight:normal;font-style:normal;color:#000;white-space:nowrap;">8,100</div>
<div style="position:absolute;left:575px;top:423px;width:402px;height:20px;line-height:20px;text-align:right;padding-right:9px;box-sizing:border-box;font-size:16px;font-weight:normal;font-style:normal;color:#000;white-space:nowrap;">24,000</div>
<div style="position:absolute;left:575px;top:443px;width:402px;height:20px;line-height:20px;text-align:right;padding-right:3px;box-sizing:border-box;font-size:16px;font-weight:normal;font-style:normal;color:#000;white-space:nowrap;">10</div>
<div style="position:absolute;left:575px;top:463px;width:402px;height:20px;line-height:20px;text-align:right;padding-right:9px;box-sizing:border-box;font-size:16px;font-weight:normal;font-style:normal;color:#000;white-space:nowrap;">2,400</div>
<div style="position:absolute;left:575px;top:483px;width:402px;height:20px;line-height:20px;text-align:right;padding-right:3px;box-sizing:border-box;font-size:16px;font-weight:normal;font-style:normal;color:#000;white-space:nowrap;">10%</div>
<div style="position:absolute;left:575px;top:503px;width:402px;height:20px;line-height:20px;text-align:right;padding-right:9px;box-sizing:border-box;font-size:16px;font-weight:bold;font-style:normal;color:#000;white-space:nowrap;">2,160</div>
<div style="position:absolute;left:575px;top:523px;width:402px;height:20px;line-height:20px;text-align:right;padding-right:9px;box-sizing:border-box;font-size:16px;font-weight:normal;font-style:normal;color:#000;white-space:nowrap;">10,260</div>
<div style="position:absolute;left:462px;top:503px;width:516px;height:1px;background:#808080;"></div>
<div style="position:absolute;left:1005px;top:503px;width:867px;height:1px;background:#808080;"></div>
<div style="position:absolute;left:705px;top:425px;width:383px;height:20px;line-height:20px;text-align:right;padding-right:27px;box-sizing:border-box;font-size:16px;font-weight:normal;font-style:normal;color:#000;white-space:nowrap;">-</div>
<div style="position:absolute;left:705px;top:445px;width:383px;height:20px;line-height:20px;text-align:right;padding-right:27px;box-sizing:border-box;font-size:16px;font-weight:normal;font-style:normal;color:#000;white-space:nowrap;">-</div>
<div style="position:absolute;left:705px;top:465px;width:383px;height:20px;line-height:20px;text-align:right;padding-right:27px;box-sizing:border-box;font-size:16px;font-weight:normal;font-style:normal;color:#000;white-space:nowrap;">-</div>
<div style="position:absolute;left:705px;top:485px;width:383px;height:20px;line-height:20px;text-align:right;padding-right:3px;box-sizing:border-box;font-size:16px;font-weight:normal;font-style:normal;color:#000;white-space:nowrap;">0%</div>
<div style="position:absolute;left:705px;top:505px;width:383px;height:20px;line-height:20px;text-align:right;padding-right:27px;box-sizing:border-box;font-size:16px;font-weight:bold;font-style:normal;color:#000;white-space:nowrap;">-</div>
<div style="position:absolute;left:705px;top:525px;width:383px;height:20px;line-height:20px;text-align:right;padding-right:27px;box-sizing:border-box;font-size:16px;font-weight:bold;font-style:normal;color:#000;white-space:nowrap;">-</div>
<div style="position:absolute;left:789px;top:425px;width:385px;height:20px;line-height:20px;text-align:right;padding-right:27px;box-sizing:border-box;font-size:16px;font-weight:normal;font-style:normal;color:#000;white-space:nowrap;">-</div>
<div style="position:absolute;left:789px;top:445px;width:385px;height:20px;line-height:20px;text-align:right;padding-right:27px;box-sizing:border-box;font-size:16px;font-weight:normal;font-style:normal;color:#000;white-space:nowrap;">-</div>
<div style="position:absolute;left:789px;top:465px;width:385px;height:20px;line-height:20px;text-align:right;padding-right:27px;box-sizing:border-box;font-size:16px;font-weight:normal;font-style:normal;color:#000;white-space:nowrap;">-</div>
<div style="position:absolute;left:789px;top:485px;width:385px;height:20px;line-height:20px;text-align:right;padding-right:3px;box-sizing:border-box;font-size:16px;font-weight:normal;font-style:normal;color:#000;white-space:nowrap;">0%</div>
<div style="position:absolute;left:789px;top:505px;width:385px;height:20px;line-height:20px;text-align:right;padding-right:27px;box-sizing:border-box;font-size:16px;font-weight:bold;font-style:normal;color:#000;white-space:nowrap;">-</div>
<div style="position:absolute;left:789px;top:525px;width:385px;height:20px;line-height:20px;text-align:right;padding-right:27px;box-sizing:border-box;font-size:16px;font-weight:bold;font-style:normal;color:#000;white-space:nowrap;">-</div>
<div style="position:absolute;left:875px;top:425px;width:393px;height:20px;line-height:20px;text-align:right;padding-right:27px;box-sizing:border-box;font-size:16px;font-weight:normal;font-style:normal;color:#000;white-space:nowrap;">-</div>
<div style="position:absolute;left:875px;top:445px;width:393px;height:20px;line-height:20px;text-align:right;padding-right:27px;box-sizing:border-box;font-size:16px;font-weight:normal;font-style:normal;color:#000;white-space:nowrap;">-</div>
<div style="position:absolute;left:875px;top:465px;width:393px;height:20px;line-height:20px;text-align:right;padding-right:27px;box-sizing:border-box;font-size:16px;font-weight:normal;font-style:normal;color:#000;white-space:nowrap;">-</div>
<div style="position:absolute;left:875px;top:485px;width:393px;height:20px;line-height:20px;text-align:right;padding-right:3px;box-sizing:border-box;font-size:16px;font-weight:normal;font-style:normal;color:#000;white-space:nowrap;">0%</div>
<div style="position:absolute;left:875px;top:505px;width:393px;height:20px;line-height:20px;text-align:right;padding-right:27px;box-sizing:border-box;font-size:16px;font-weight:bold;font-style:normal;color:#000;white-space:nowrap;">-</div>
<div style="position:absolute;left:875px;top:525px;width:393px;height:20px;line-height:20px;text-align:right;padding-right:27px;box-sizing:border-box;font-size:16px;font-weight:bold;font-style:normal;color:#000;white-space:nowrap;">-</div>
<div style="position:absolute;left:969px;top:425px;width:402px;height:20px;line-height:20px;text-align:right;padding-right:9px;box-sizing:border-box;font-size:16px;font-weight:normal;font-style:normal;color:#000;white-space:nowrap;">2,000</div>
<div style="position:absolute;left:969px;top:445px;width:402px;height:20px;line-height:20px;text-align:right;padding-right:9px;box-sizing:border-box;font-size:16px;font-weight:normal;font-style:normal;color:#000;white-space:nowrap;">10</div>
<div style="position:absolute;left:969px;top:465px;width:402px;height:20px;line-height:20px;text-align:right;padding-right:9px;box-sizing:border-box;font-size:16px;font-weight:normal;font-style:normal;color:#000;white-space:nowrap;">200</div>
<div style="position:absolute;left:969px;top:485px;width:402px;height:20px;line-height:20px;text-align:right;padding-right:3px;box-sizing:border-box;font-size:16px;font-weight:normal;font-style:normal;color:#000;white-space:nowrap;">10%</div>
<div style="position:absolute;left:969px;top:505px;width:402px;height:20px;line-height:20px;text-align:right;padding-right:9px;box-sizing:border-box;font-size:16px;font-weight:bold;font-style:normal;color:#000;white-space:nowrap;">180</div>
<div style="position:absolute;left:969px;top:525px;width:402px;height:20px;line-height:20px;text-align:right;padding-right:9px;box-sizing:border-box;font-size:16px;font-weight:bold;font-style:normal;color:#000;white-space:nowrap;">180</div>
<div style="position:absolute;left:1072px;top:425px;width:402px;height:20px;line-height:20px;text-align:right;padding-right:9px;box-sizing:border-box;font-size:16px;font-weight:normal;font-style:normal;color:#000;white-space:nowrap;">2,000</div>
<div style="position:absolute;left:1072px;top:445px;width:402px;height:20px;line-height:20px;text-align:right;padding-right:9px;box-sizing:border-box;font-size:16px;font-weight:normal;font-style:normal;color:#000;white-space:nowrap;">10</div>
<div style="position:absolute;left:1072px;top:465px;width:402px;height:20px;line-height:20px;text-align:right;padding-right:9px;box-sizing:border-box;font-size:16px;font-weight:normal;font-style:normal;color:#000;white-space:nowrap;">200</div>
<div style="position:absolute;left:1072px;top:485px;width:402px;height:20px;line-height:20px;text-align:right;padding-right:3px;box-sizing:border-box;font-size:16px;font-weight:normal;font-style:normal;color:#000;white-space:nowrap;">10%</div>
<div style="position:absolute;left:1072px;top:505px;width:402px;height:20px;line-height:20px;text-align:right;padding-right:9px;box-sizing:border-box;font-size:16px;font-weight:bold;font-style:normal;color:#000;white-space:nowrap;">180</div>
<div style="position:absolute;left:1072px;top:525px;width:402px;height:20px;line-height:20px;text-align:right;padding-right:9px;box-sizing:border-box;font-size:16px;font-weight:bold;font-style:normal;color:#000;white-space:nowrap;">360</div>
<div style="position:absolute;left:1175px;top:425px;width:402px;height:20px;line-height:20px;text-align:right;padding-right:9px;box-sizing:border-box;font-size:16px;font-weight:normal;font-style:normal;color:#000;white-space:nowrap;">2,000</div>
<div style="position:absolute;left:1175px;top:445px;width:402px;height:20px;line-height:20px;text-align:right;padding-right:9px;box-sizing:border-box;font-size:16px;font-weight:normal;font-style:normal;color:#000;white-space:nowrap;">10</div>
<div style="position:absolute;left:1175px;top:465px;width:402px;height:20px;line-height:20px;text-align:right;padding-right:9px;box-sizing:border-box;font-size:16px;font-weight:normal;font-style:normal;color:#000;white-space:nowrap;">200</div>
<div style="position:absolute;left:1175px;top:485px;width:402px;height:20px;line-height:20px;text-align:right;padding-right:3px;box-sizing:border-box;font-size:16px;font-weight:normal;font-style:normal;color:#000;white-space:nowrap;">10%</div>
<div style="position:absolute;left:1175px;top:505px;width:402px;height:20px;line-height:20px;text-align:right;padding-right:9px;box-sizing:border-box;font-size:16px;font-weight:bold;font-style:normal;color:#000;white-space:nowrap;">180</div>
<div style="position:absolute;left:1175px;top:525px;width:402px;height:20px;line-height:20px;text-align:right;padding-right:9px;box-sizing:border-box;font-size:16px;font-weight:bold;font-style:normal;color:#000;white-space:nowrap;">540</div>
<div style="position:absolute;left:1278px;top:425px;width:402px;height:20px;line-height:20px;text-align:right;padding-right:9px;box-sizing:border-box;font-size:16px;font-weight:normal;font-style:normal;color:#000;white-space:nowrap;">2,000</div>
<div style="position:absolute;left:1278px;top:445px;width:402px;height:20px;line-height:20px;text-align:right;padding-right:9px;box-sizing:border-box;font-size:16px;font-weight:normal;font-style:normal;color:#000;white-space:nowrap;">10</div>
<div style="position:absolute;left:1278px;top:465px;width:402px;height:20px;line-height:20px;text-align:right;padding-right:9px;box-sizing:border-box;font-size:16px;font-weight:normal;font-style:normal;color:#000;white-space:nowrap;">200</div>
<div style="position:absolute;left:1278px;top:485px;width:402px;height:20px;line-height:20px;text-align:right;padding-right:3px;box-sizing:border-box;font-size:16px;font-weight:normal;font-style:normal;color:#000;white-space:nowrap;">10%</div>
<div style="position:absolute;left:1278px;top:505px;width:402px;height:20px;line-height:20px;text-align:right;padding-right:9px;box-sizing:border-box;font-size:16px;font-weight:bold;font-style:normal;color:#000;white-space:nowrap;">180</div>
<div style="position:absolute;left:1278px;top:525px;width:402px;height:20px;line-height:20px;text-align:right;padding-right:9px;box-sizing:border-box;font-size:16px;font-weight:bold;font-style:normal;color:#000;white-space:nowrap;">720</div>
<div style="position:absolute;left:1381px;top:425px;width:402px;height:20px;line-height:20px;text-align:right;padding-right:9px;box-sizing:border-box;font-size:16px;font-weight:normal;font-style:normal;color:#000;white-space:nowrap;">2,000</div>
<div style="position:absolute;left:1381px;top:445px;width:402px;height:20px;line-height:20px;text-align:right;padding-right:9px;box-sizing:border-box;font-size:16px;font-weight:normal;font-style:normal;color:#000;white-space:nowrap;">10</div>
<div style="position:absolute;left:1381px;top:465px;width:402px;height:20px;line-height:20px;text-align:right;padding-right:9px;box-sizing:border-box;font-size:16px;font-weight:normal;font-style:normal;color:#000;white-space:nowrap;">200</div>
<div style="position:absolute;left:1381px;top:485px;width:402px;height:20px;line-height:20px;text-align:right;padding-right:3px;box-sizing:border-box;font-size:16px;font-weight:normal;font-style:normal;color:#000;white-space:nowrap;">10%</div>
<div style="position:absolute;left:1381px;top:505px;width:402px;height:20px;line-height:20px;text-align:right;padding-right:9px;box-sizing:border-box;font-size:16px;font-weight:bold;font-style:normal;color:#000;white-space:nowrap;">180</div>
<div style="position:absolute;left:1381px;top:525px;width:402px;height:20px;line-height:20px;text-align:right;padding-right:9px;box-sizing:border-box;font-size:16px;font-weight:bold;font-style:normal;color:#000;white-space:nowrap;">900</div>
<div style="position:absolute;left:1484px;top:425px;width:402px;height:20px;line-height:20px;text-align:right;padding-right:9px;box-sizing:border-box;font-size:16px;font-weight:normal;font-style:normal;color:#000;white-space:nowrap;">2,000</div>
<div style="position:absolute;left:1484px;top:445px;width:402px;height:20px;line-height:20px;text-align:right;padding-right:9px;box-sizing:border-box;font-size:16px;font-weight:normal;font-style:normal;color:#000;white-space:nowrap;">10</div>
<div style="position:absolute;left:1484px;top:465px;width:402px;height:20px;line-height:20px;text-align:right;padding-right:9px;box-sizing:border-box;font-size:16px;font-weight:normal;font-style:normal;color:#000;white-space:nowrap;">200</div>
<div style="position:absolute;left:1484px;top:485px;width:402px;height:20px;line-height:20px;text-align:right;padding-right:3px;box-sizing:border-box;font-size:16px;font-weight:normal;font-style:normal;color:#000;white-space:nowrap;">10%</div>
<div style="position:absolute;left:1484px;top:505px;width:402px;height:20px;line-height:20px;text-align:right;padding-right:9px;box-sizing:border-box;font-size:16px;font-weight:bold;font-style:normal;color:#000;white-space:nowrap;">180</div>
<div style="position:absolute;left:1484px;top:525px;width:402px;height:20px;line-height:20px;text-align:right;padding-right:9px;box-sizing:border-box;font-size:16px;font-weight:bold;font-style:normal;color:#000;white-space:nowrap;">1,080</div>
<div style="position:absolute;left:-272px;top:563px;width:620px;height:20px;line-height:20px;text-align:right;padding-right:2px;box-sizing:border-box;font-size:16px;font-weight:bold;font-style:normal;color:#000;white-space:nowrap;letter-spacing:0.269px;">Local Partnership</div>
<div style="position:absolute;left:-272px;top:583px;width:620px;height:20px;line-height:20px;text-align:right;padding-right:2px;box-sizing:border-box;font-size:16px;font-weight:normal;font-style:normal;color:#000;white-space:nowrap;letter-spacing:0.282px;">Marketing Spending</div>
<div style="position:absolute;left:-272px;top:603px;width:620px;height:20px;line-height:20px;text-align:right;padding-right:2px;box-sizing:border-box;font-size:16px;font-weight:normal;font-style:normal;color:#000;white-space:nowrap;letter-spacing:1.3px;">CAC</div>
<div style="position:absolute;left:-272px;top:623px;width:620px;height:20px;line-height:20px;text-align:right;padding-right:2px;box-sizing:border-box;font-size:16px;font-weight:normal;font-style:normal;color:#000;white-space:nowrap;letter-spacing:0.179px;">Gross Lead Generated</div>
<div style="position:absolute;left:-272px;top:643px;width:620px;height:20px;line-height:20px;text-align:right;padding-right:2px;box-sizing:border-box;font-size:16px;font-weight:normal;font-style:normal;color:#000;white-space:nowrap;letter-spacing:0.227px;">Churn Rate %</div>
<div style="position:absolute;left:-272px;top:663px;width:620px;height:20px;line-height:20px;text-align:right;padding-right:2px;box-sizing:border-box;font-size:16px;font-weight:bold;font-style:normal;color:#000;white-space:nowrap;letter-spacing:0.311px;">Net Client Acquired</div>
<div style="position:absolute;left:-272px;top:683px;width:620px;height:20px;line-height:20px;text-align:right;padding-right:2px;box-sizing:border-box;font-size:16px;font-weight:normal;font-style:normal;color:#000;white-space:nowrap;letter-spacing:0.029px;">Cumumative Clients</div>
<div style="position:absolute;left:163px;top:583px;width:402px;height:20px;line-height:20px;text-align:right;padding-right:9px;box-sizing:border-box;font-size:16px;font-weight:normal;font-style:normal;color:#000;white-space:nowrap;">18,000</div>
<div style="position:absolute;left:163px;top:603px;width:402px;height:20px;line-height:20px;text-align:right;padding-right:3px;box-sizing:border-box;font-size:16px;font-weight:normal;font-style:normal;color:#000;white-space:nowrap;">7.5</div>
<div style="position:absolute;left:163px;top:623px;width:402px;height:20px;line-height:20px;text-align:right;padding-right:9px;box-sizing:border-box;font-size:16px;font-weight:normal;font-style:normal;color:#000;white-space:nowrap;">1,800</div>
<div style="position:absolute;left:163px;top:643px;width:402px;height:20px;line-height:20px;text-align:right;padding-right:3px;box-sizing:border-box;font-size:16px;font-weight:normal;font-style:normal;color:#000;white-space:nowrap;">8%</div>
<div style="position:absolute;left:163px;top:663px;width:402px;height:20px;line-height:20px;text-align:right;padding-right:9px;box-sizing:border-box;font-size:16px;font-weight:bold;font-style:normal;color:#000;white-space:nowrap;">1,620</div>
<div style="position:absolute;left:163px;top:683px;width:402px;height:20px;line-height:20px;text-align:right;padding-right:9px;box-sizing:border-box;font-size:16px;font-weight:normal;font-style:normal;color:#000;white-space:nowrap;">1,620</div>
<div style="position:absolute;left:266px;top:583px;width:402px;height:20px;line-height:20px;text-align:right;padding-right:9px;box-sizing:border-box;font-size:16px;font-weight:normal;font-style:normal;color:#000;white-space:nowrap;">24,000</div>
<div style="position:absolute;left:266px;top:603px;width:402px;height:20px;line-height:20px;text-align:right;padding-right:3px;box-sizing:border-box;font-size:16px;font-weight:normal;font-style:normal;color:#000;white-space:nowrap;">10</div>
<div style="position:absolute;left:266px;top:623px;width:402px;height:20px;line-height:20px;text-align:right;padding-right:9px;box-sizing:border-box;font-size:16px;font-weight:normal;font-style:normal;color:#000;white-space:nowrap;">2,400</div>
<div style="position:absolute;left:266px;top:643px;width:402px;height:20px;line-height:20px;text-align:right;padding-right:3px;box-sizing:border-box;font-size:16px;font-weight:normal;font-style:normal;color:#000;white-space:nowrap;">10%</div>
<div style="position:absolute;left:266px;top:663px;width:402px;height:20px;line-height:20px;text-align:right;padding-right:9px;box-sizing:border-box;font-size:16px;font-weight:bold;font-style:normal;color:#000;white-space:nowrap;">2,160</div>
<div style="position:absolute;left:266px;top:683px;width:402px;height:20px;line-height:20px;text-align:right;padding-right:9px;box-sizing:border-box;font-size:16px;font-weight:normal;font-style:normal;color:#000;white-space:nowrap;">3,780</div>
<div style="position:absolute;left:369px;top:583px;width:402px;height:20px;line-height:20px;text-align:right;padding-right:9px;box-sizing:border-box;font-size:16px;font-weight:normal;font-style:normal;color:#000;white-space:nowrap;">24,000</div>
<div style="position:absolute;left:369px;top:603px;width:402px;height:20px;line-height:20px;text-align:right;padding-right:3px;box-sizing:border-box;font-size:16px;font-weight:normal;font-style:normal;color:#000;white-space:nowrap;">10</div>
<div style="position:absolute;left:369px;top:623px;width:402px;height:20px;line-height:20px;text-align:right;padding-right:9px;box-sizing:border-box;font-size:16px;font-weight:normal;font-style:normal;color:#000;white-space:nowrap;">2,400</div>
<div style="position:absolute;left:369px;top:643px;width:402px;height:20px;line-height:20px;text-align:right;padding-right:3px;box-sizing:border-box;font-size:16px;font-weight:normal;font-style:normal;color:#000;white-space:nowrap;">10%</div>
<div style="position:absolute;left:369px;top:663px;width:402px;height:20px;line-height:20px;text-align:right;padding-right:9px;box-sizing:border-box;font-size:16px;font-weight:bold;font-style:normal;color:#000;white-space:nowrap;">2,160</div>
<div style="position:absolute;left:369px;top:683px;width:402px;height:20px;line-height:20px;text-align:right;padding-right:9px;box-sizing:border-box;font-size:16px;font-weight:normal;font-style:normal;color:#000;white-space:nowrap;">5,940</div>
<div style="position:absolute;left:472px;top:583px;width:402px;height:20px;line-height:20px;text-align:right;padding-right:9px;box-sizing:border-box;font-size:16px;font-weight:normal;font-style:normal;color:#000;white-space:nowrap;">24,000</div>
<div style="position:absolute;left:472px;top:603px;width:402px;height:20px;line-height:20px;text-align:right;padding-right:3px;box-sizing:border-box;font-size:16px;font-weight:normal;font-style:normal;color:#000;white-space:nowrap;">10</div>
<div style="position:absolute;left:472px;top:623px;width:402px;height:20px;line-height:20px;text-align:right;padding-right:9px;box-sizing:border-box;font-size:16px;font-weight:normal;font-style:normal;color:#000;white-space:nowrap;">2,400</div>
<div style="position:absolute;left:472px;top:643px;width:402px;height:20px;line-height:20px;text-align:right;padding-right:3px;box-sizing:border-box;font-size:16px;font-weight:normal;font-style:normal;color:#000;white-space:nowrap;">10%</div>
<div style="position:absolute;left:472px;top:663px;width:402px;height:20px;line-height:20px;text-align:right;padding-right:9px;box-sizing:border-box;font-size:16px;font-weight:bold;font-style:normal;color:#000;white-space:nowrap;">2,160</div>
<div style="position:absolute;left:472px;top:683px;width:402px;height:20px;line-height:20px;text-align:right;padding-right:9px;box-sizing:border-box;font-size:16px;font-weight:normal;font-style:normal;color:#000;white-space:nowrap;">8,100</div>
<div style="position:absolute;left:575px;top:583px;width:402px;height:20px;line-height:20px;text-align:right;padding-right:9px;box-sizing:border-box;font-size:16px;font-weight:normal;font-style:normal;color:#000;white-space:nowrap;">24,000</div>
<div style="position:absolute;left:575px;top:603px;width:402px;height:20px;line-height:20px;text-align:right;padding-right:3px;box-sizing:border-box;font-size:16px;font-weight:normal;font-style:normal;color:#000;white-space:nowrap;">10</div>
<div style="position:absolute;left:575px;top:623px;width:402px;height:20px;line-height:20px;text-align:right;padding-right:9px;box-sizing:border-box;font-size:16px;font-weight:normal;font-style:normal;color:#000;white-space:nowrap;">2,400</div>
<div style="position:absolute;left:575px;top:643px;width:402px;height:20px;line-height:20px;text-align:right;padding-right:3px;box-sizing:border-box;font-size:16px;font-weight:normal;font-style:normal;color:#000;white-space:nowrap;">10%</div>
<div style="position:absolute;left:575px;top:663px;width:402px;height:20px;line-height:20px;text-align:right;padding-right:9px;box-sizing:border-box;font-size:16px;font-weight:bold;font-style:normal;color:#000;white-space:nowrap;">2,160</div>
<div style="position:absolute;left:575px;top:683px;width:402px;height:20px;line-height:20px;text-align:right;padding-right:9px;box-sizing:border-box;font-size:16px;font-weight:normal;font-style:normal;color:#000;white-space:nowrap;">10,260</div>
<div style="position:absolute;left:462px;top:663px;width:516px;height:1px;background:#808080;"></div>
<div style="position:absolute;left:1005px;top:663px;width:867px;height:1px;background:#808080;"></div>
<div style="position:absolute;left:705px;top:585px;width:383px;height:20px;line-height:20px;text-align:right;padding-right:27px;box-sizing:border-box;font-size:16px;font-weight:normal;font-style:normal;color:#000;white-space:nowrap;">-</div>
<div style="position:absolute;left:705px;top:605px;width:383px;height:20px;line-height:20px;text-align:right;padding-right:27px;box-sizing:border-box;font-size:16px;font-weight:normal;font-style:normal;color:#000;white-space:nowrap;">-</div>
<div style="position:absolute;left:705px;top:625px;width:383px;height:20px;line-height:20px;text-align:right;padding-right:27px;box-sizing:border-box;font-size:16px;font-weight:normal;font-style:normal;color:#000;white-space:nowrap;">-</div>
<div style="position:absolute;left:705px;top:645px;width:383px;height:20px;line-height:20px;text-align:right;padding-right:3px;box-sizing:border-box;font-size:16px;font-weight:normal;font-style:normal;color:#000;white-space:nowrap;">0%</div>
<div style="position:absolute;left:705px;top:665px;width:383px;height:20px;line-height:20px;text-align:right;padding-right:27px;box-sizing:border-box;font-size:16px;font-weight:bold;font-style:normal;color:#000;white-space:nowrap;">-</div>
<div style="position:absolute;left:705px;top:685px;width:383px;height:20px;line-height:20px;text-align:right;padding-right:27px;box-sizing:border-box;font-size:16px;font-weight:normal;font-style:normal;color:#000;white-space:nowrap;">-</div>
<div style="position:absolute;left:789px;top:585px;width:385px;height:20px;line-height:20px;text-align:right;padding-right:27px;box-sizing:border-box;font-size:16px;font-weight:normal;font-style:normal;color:#000;white-space:nowrap;">-</div>
<div style="position:absolute;left:789px;top:605px;width:385px;height:20px;line-height:20px;text-align:right;padding-right:27px;box-sizing:border-box;font-size:16px;font-weight:normal;font-style:normal;color:#000;white-space:nowrap;">-</div>
<div style="position:absolute;left:789px;top:625px;width:385px;height:20px;line-height:20px;text-align:right;padding-right:27px;box-sizing:border-box;font-size:16px;font-weight:normal;font-style:normal;color:#000;white-space:nowrap;">-</div>
<div style="position:absolute;left:789px;top:645px;width:385px;height:20px;line-height:20px;text-align:right;padding-right:3px;box-sizing:border-box;font-size:16px;font-weight:normal;font-style:normal;color:#000;white-space:nowrap;">0%</div>
<div style="position:absolute;left:789px;top:665px;width:385px;height:20px;line-height:20px;text-align:right;padding-right:27px;box-sizing:border-box;font-size:16px;font-weight:bold;font-style:normal;color:#000;white-space:nowrap;">-</div>
<div style="position:absolute;left:789px;top:685px;width:385px;height:20px;line-height:20px;text-align:right;padding-right:27px;box-sizing:border-box;font-size:16px;font-weight:normal;font-style:normal;color:#000;white-space:nowrap;">-</div>
<div style="position:absolute;left:875px;top:585px;width:393px;height:20px;line-height:20px;text-align:right;padding-right:27px;box-sizing:border-box;font-size:16px;font-weight:normal;font-style:normal;color:#000;white-space:nowrap;">-</div>
<div style="position:absolute;left:875px;top:605px;width:393px;height:20px;line-height:20px;text-align:right;padding-right:27px;box-sizing:border-box;font-size:16px;font-weight:normal;font-style:normal;color:#000;white-space:nowrap;">-</div>
<div style="position:absolute;left:875px;top:625px;width:393px;height:20px;line-height:20px;text-align:right;padding-right:27px;box-sizing:border-box;font-size:16px;font-weight:normal;font-style:normal;color:#000;white-space:nowrap;">-</div>
<div style="position:absolute;left:875px;top:645px;width:393px;height:20px;line-height:20px;text-align:right;padding-right:3px;box-sizing:border-box;font-size:16px;font-weight:normal;font-style:normal;color:#000;white-space:nowrap;">0%</div>
<div style="position:absolute;left:875px;top:665px;width:393px;height:20px;line-height:20px;text-align:right;padding-right:27px;box-sizing:border-box;font-size:16px;font-weight:bold;font-style:normal;color:#000;white-space:nowrap;">-</div>
<div style="position:absolute;left:875px;top:685px;width:393px;height:20px;line-height:20px;text-align:right;padding-right:27px;box-sizing:border-box;font-size:16px;font-weight:normal;font-style:normal;color:#000;white-space:nowrap;">-</div>
<div style="position:absolute;left:969px;top:585px;width:402px;height:20px;line-height:20px;text-align:right;padding-right:9px;box-sizing:border-box;font-size:16px;font-weight:normal;font-style:normal;color:#000;white-space:nowrap;">2,000</div>
<div style="position:absolute;left:969px;top:605px;width:402px;height:20px;line-height:20px;text-align:right;padding-right:9px;box-sizing:border-box;font-size:16px;font-weight:normal;font-style:normal;color:#000;white-space:nowrap;">10</div>
<div style="position:absolute;left:969px;top:625px;width:402px;height:20px;line-height:20px;text-align:right;padding-right:9px;box-sizing:border-box;font-size:16px;font-weight:normal;font-style:normal;color:#000;white-space:nowrap;">200</div>
<div style="position:absolute;left:969px;top:645px;width:402px;height:20px;line-height:20px;text-align:right;padding-right:3px;box-sizing:border-box;font-size:16px;font-weight:normal;font-style:normal;color:#000;white-space:nowrap;">10%</div>
<div style="position:absolute;left:969px;top:665px;width:402px;height:20px;line-height:20px;text-align:right;padding-right:9px;box-sizing:border-box;font-size:16px;font-weight:bold;font-style:normal;color:#000;white-space:nowrap;">180</div>
<div style="position:absolute;left:969px;top:685px;width:402px;height:20px;line-height:20px;text-align:right;padding-right:9px;box-sizing:border-box;font-size:16px;font-weight:normal;font-style:normal;color:#000;white-space:nowrap;">180</div>
<div style="position:absolute;left:1072px;top:585px;width:402px;height:20px;line-height:20px;text-align:right;padding-right:9px;box-sizing:border-box;font-size:16px;font-weight:normal;font-style:normal;color:#000;white-space:nowrap;">2,000</div>
<div style="position:absolute;left:1072px;top:605px;width:402px;height:20px;line-height:20px;text-align:right;padding-right:9px;box-sizing:border-box;font-size:16px;font-weight:normal;font-style:normal;color:#000;white-space:nowrap;">10</div>
<div style="position:absolute;left:1072px;top:625px;width:402px;height:20px;line-height:20px;text-align:right;padding-right:9px;box-sizing:border-box;font-size:16px;font-weight:normal;font-style:normal;color:#000;white-space:nowrap;">200</div>
<div style="position:absolute;left:1072px;top:645px;width:402px;height:20px;line-height:20px;text-align:right;padding-right:3px;box-sizing:border-box;font-size:16px;font-weight:normal;font-style:normal;color:#000;white-space:nowrap;">10%</div>
<div style="position:absolute;left:1072px;top:665px;width:402px;height:20px;line-height:20px;text-align:right;padding-right:9px;box-sizing:border-box;font-size:16px;font-weight:bold;font-style:normal;color:#000;white-space:nowrap;">180</div>
<div style="position:absolute;left:1072px;top:685px;width:402px;height:20px;line-height:20px;text-align:right;padding-right:9px;box-sizing:border-box;font-size:16px;font-weight:normal;font-style:normal;color:#000;white-space:nowrap;">360</div>
<div style="position:absolute;left:1175px;top:585px;width:402px;height:20px;line-height:20px;text-align:right;padding-right:9px;box-sizing:border-box;font-size:16px;font-weight:normal;font-style:normal;color:#000;white-space:nowrap;">2,000</div>
<div style="position:absolute;left:1175px;top:605px;width:402px;height:20px;line-height:20px;text-align:right;padding-right:9px;box-sizing:border-box;font-size:16px;font-weight:normal;font-style:normal;color:#000;white-space:nowrap;">10</div>
<div style="position:absolute;left:1175px;top:625px;width:402px;height:20px;line-height:20px;text-align:right;padding-right:9px;box-sizing:border-box;font-size:16px;font-weight:normal;font-style:normal;color:#000;white-space:nowrap;">200</div>
<div style="position:absolute;left:1175px;top:645px;width:402px;height:20px;line-height:20px;text-align:right;padding-right:3px;box-sizing:border-box;font-size:16px;font-weight:normal;font-style:normal;color:#000;white-space:nowrap;">10%</div>
<div style="position:absolute;left:1175px;top:665px;width:402px;height:20px;line-height:20px;text-align:right;padding-right:9px;box-sizing:border-box;font-size:16px;font-weight:bold;font-style:normal;color:#000;white-space:nowrap;">180</div>
<div style="position:absolute;left:1175px;top:685px;width:402px;height:20px;line-height:20px;text-align:right;padding-right:9px;box-sizing:border-box;font-size:16px;font-weight:normal;font-style:normal;color:#000;white-space:nowrap;">540</div>
<div style="position:absolute;left:1278px;top:585px;width:402px;height:20px;line-height:20px;text-align:right;padding-right:9px;box-sizing:border-box;font-size:16px;font-weight:normal;font-style:normal;color:#000;white-space:nowrap;">2,000</div>
<div style="position:absolute;left:1278px;top:605px;width:402px;height:20px;line-height:20px;text-align:right;padding-right:9px;box-sizing:border-box;font-size:16px;font-weight:normal;font-style:normal;color:#000;white-space:nowrap;">10</div>
<div style="position:absolute;left:1278px;top:625px;width:402px;height:20px;line-height:20px;text-align:right;padding-right:9px;box-sizing:border-box;font-size:16px;font-weight:normal;font-style:normal;color:#000;white-space:nowrap;">200</div>
<div style="position:absolute;left:1278px;top:645px;width:402px;height:20px;line-height:20px;text-align:right;padding-right:3px;box-sizing:border-box;font-size:16px;font-weight:normal;font-style:normal;color:#000;white-space:nowrap;">10%</div>
<div style="position:absolute;left:1278px;top:665px;width:402px;height:20px;line-height:20px;text-align:right;padding-right:9px;box-sizing:border-box;font-size:16px;font-weight:bold;font-style:normal;color:#000;white-space:nowrap;">180</div>
<div style="position:absolute;left:1278px;top:685px;width:402px;height:20px;line-height:20px;text-align:right;padding-right:9px;box-sizing:border-box;font-size:16px;font-weight:normal;font-style:normal;color:#000;white-space:nowrap;">720</div>
<div style="position:absolute;left:1381px;top:585px;width:402px;height:20px;line-height:20px;text-align:right;padding-right:9px;box-sizing:border-box;font-size:16px;font-weight:normal;font-style:normal;color:#000;white-space:nowrap;">2,000</div>
<div style="position:absolute;left:1381px;top:605px;width:402px;height:20px;line-height:20px;text-align:right;padding-right:9px;box-sizing:border-box;font-size:16px;font-weight:normal;font-style:normal;color:#000;white-space:nowrap;">10</div>
<div style="position:absolute;left:1381px;top:625px;width:402px;height:20px;line-height:20px;text-align:right;padding-right:9px;box-sizing:border-box;font-size:16px;font-weight:normal;font-style:normal;color:#000;white-space:nowrap;">200</div>
<div style="position:absolute;left:1381px;top:645px;width:402px;height:20px;line-height:20px;text-align:right;padding-right:3px;box-sizing:border-box;font-size:16px;font-weight:normal;font-style:normal;color:#000;white-space:nowrap;">10%</div>
<div style="position:absolute;left:1381px;top:665px;width:402px;height:20px;line-height:20px;text-align:right;padding-right:9px;box-sizing:border-box;font-size:16px;font-weight:bold;font-style:normal;color:#000;white-space:nowrap;">180</div>
<div style="position:absolute;left:1381px;top:685px;width:402px;height:20px;line-height:20px;text-align:right;padding-right:9px;box-sizing:border-box;font-size:16px;font-weight:normal;font-style:normal;color:#000;white-space:nowrap;">900</div>
<div style="position:absolute;left:1484px;top:585px;width:402px;height:20px;line-height:20px;text-align:right;padding-right:9px;box-sizing:border-box;font-size:16px;font-weight:normal;font-style:normal;color:#000;white-space:nowrap;">2,000</div>
<div style="position:absolute;left:1484px;top:605px;width:402px;height:20px;line-height:20px;text-align:right;padding-right:9px;box-sizing:border-box;font-size:16px;font-weight:normal;font-style:normal;color:#000;white-space:nowrap;">10</div>
<div style="position:absolute;left:1484px;top:625px;width:402px;height:20px;line-height:20px;text-align:right;padding-right:9px;box-sizing:border-box;font-size:16px;font-weight:normal;font-style:normal;color:#000;white-space:nowrap;">200</div>
<div style="position:absolute;left:1484px;top:645px;width:402px;height:20px;line-height:20px;text-align:right;padding-right:3px;box-sizing:border-box;font-size:16px;font-weight:normal;font-style:normal;color:#000;white-space:nowrap;">10%</div>
<div style="position:absolute;left:1484px;top:665px;width:402px;height:20px;line-height:20px;text-align:right;padding-right:9px;box-sizing:border-box;font-size:16px;font-weight:bold;font-style:normal;color:#000;white-space:nowrap;">180</div>
<div style="position:absolute;left:1484px;top:685px;width:402px;height:20px;line-height:20px;text-align:right;padding-right:9px;box-sizing:border-box;font-size:16px;font-weight:normal;font-style:normal;color:#000;white-space:nowrap;">1,080</div>
<div style="position:absolute;left:-272px;top:723px;width:620px;height:20px;line-height:20px;text-align:right;padding-right:2px;box-sizing:border-box;font-size:16px;font-weight:bold;font-style:normal;color:#000;white-space:nowrap;letter-spacing:0.211px;">Influencer Marketing</div>
<div style="position:absolute;left:-272px;top:743px;width:620px;height:20px;line-height:20px;text-align:right;padding-right:2px;box-sizing:border-box;font-size:16px;font-weight:normal;font-style:normal;color:#000;white-space:nowrap;letter-spacing:0.282px;">Marketing Spending</div>
<div style="position:absolute;left:-272px;top:763px;width:620px;height:20px;line-height:20px;text-align:right;padding-right:2px;box-sizing:border-box;font-size:16px;font-weight:normal;font-style:normal;color:#000;white-space:nowrap;letter-spacing:1.3px;">CAC</div>
<div style="position:absolute;left:-272px;top:783px;width:620px;height:20px;line-height:20px;text-align:right;padding-right:2px;box-sizing:border-box;font-size:16px;font-weight:normal;font-style:normal;color:#000;white-space:nowrap;letter-spacing:0.179px;">Gross Lead Generated</div>
<div style="position:absolute;left:-272px;top:803px;width:620px;height:20px;line-height:20px;text-align:right;padding-right:2px;box-sizing:border-box;font-size:16px;font-weight:normal;font-style:normal;color:#000;white-space:nowrap;letter-spacing:0.227px;">Churn Rate %</div>
<div style="position:absolute;left:-272px;top:823px;width:620px;height:20px;line-height:20px;text-align:right;padding-right:2px;box-sizing:border-box;font-size:16px;font-weight:bold;font-style:normal;color:#000;white-space:nowrap;letter-spacing:0.311px;">Net Client Acquired</div>
<div style="position:absolute;left:-272px;top:843px;width:620px;height:20px;line-height:20px;text-align:right;padding-right:2px;box-sizing:border-box;font-size:16px;font-weight:normal;font-style:normal;color:#000;white-space:nowrap;letter-spacing:0.029px;">Cumumative Clients</div>
<div style="position:absolute;left:163px;top:743px;width:402px;height:20px;line-height:20px;text-align:right;padding-right:9px;box-sizing:border-box;font-size:16px;font-weight:normal;font-style:normal;color:#000;white-space:nowrap;">18,000</div>
<div style="position:absolute;left:163px;top:763px;width:402px;height:20px;line-height:20px;text-align:right;padding-right:3px;box-sizing:border-box;font-size:16px;font-weight:normal;font-style:normal;color:#000;white-space:nowrap;">7.5</div>
<div style="position:absolute;left:163px;top:783px;width:402px;height:20px;line-height:20px;text-align:right;padding-right:9px;box-sizing:border-box;font-size:16px;font-weight:normal;font-style:normal;color:#000;white-space:nowrap;">1,800</div>
<div style="position:absolute;left:163px;top:803px;width:402px;height:20px;line-height:20px;text-align:right;padding-right:3px;box-sizing:border-box;font-size:16px;font-weight:normal;font-style:normal;color:#000;white-space:nowrap;">8%</div>
<div style="position:absolute;left:163px;top:823px;width:402px;height:20px;line-height:20px;text-align:right;padding-right:9px;box-sizing:border-box;font-size:16px;font-weight:bold;font-style:normal;color:#000;white-space:nowrap;">1,620</div>
<div style="position:absolute;left:163px;top:843px;width:402px;height:20px;line-height:20px;text-align:right;padding-right:9px;box-sizing:border-box;font-size:16px;font-weight:normal;font-style:normal;color:#000;white-space:nowrap;">1,620</div>
<div style="position:absolute;left:266px;top:743px;width:402px;height:20px;line-height:20px;text-align:right;padding-right:9px;box-sizing:border-box;font-size:16px;font-weight:normal;font-style:normal;color:#000;white-space:nowrap;">24,000</div>
<div style="position:absolute;left:266px;top:763px;width:402px;height:20px;line-height:20px;text-align:right;padding-right:3px;box-sizing:border-box;font-size:16px;font-weight:normal;font-style:normal;color:#000;white-space:nowrap;">10</div>
<div style="position:absolute;left:266px;top:783px;width:402px;height:20px;line-height:20px;text-align:right;padding-right:9px;box-sizing:border-box;font-size:16px;font-weight:normal;font-style:normal;color:#000;white-space:nowrap;">2,400</div>
<div style="position:absolute;left:266px;top:803px;width:402px;height:20px;line-height:20px;text-align:right;padding-right:3px;box-sizing:border-box;font-size:16px;font-weight:normal;font-style:normal;color:#000;white-space:nowrap;">10%</div>
<div style="position:absolute;left:266px;top:823px;width:402px;height:20px;line-height:20px;text-align:right;padding-right:9px;box-sizing:border-box;font-size:16px;font-weight:bold;font-style:normal;color:#000;white-space:nowrap;">2,160</div>
<div style="position:absolute;left:266px;top:843px;width:402px;height:20px;line-height:20px;text-align:right;padding-right:9px;box-sizing:border-box;font-size:16px;font-weight:normal;font-style:normal;color:#000;white-space:nowrap;">3,780</div>
<div style="position:absolute;left:369px;top:743px;width:402px;height:20px;line-height:20px;text-align:right;padding-right:9px;box-sizing:border-box;font-size:16px;font-weight:normal;font-style:normal;color:#000;white-space:nowrap;">24,000</div>
<div style="position:absolute;left:369px;top:763px;width:402px;height:20px;line-height:20px;text-align:right;padding-right:3px;box-sizing:border-box;font-size:16px;font-weight:normal;font-style:normal;color:#000;white-space:nowrap;">10</div>
<div style="position:absolute;left:369px;top:783px;width:402px;height:20px;line-height:20px;text-align:right;padding-right:9px;box-sizing:border-box;font-size:16px;font-weight:normal;font-style:normal;color:#000;white-space:nowrap;">2,400</div>
<div style="position:absolute;left:369px;top:803px;width:402px;height:20px;line-height:20px;text-align:right;padding-right:3px;box-sizing:border-box;font-size:16px;font-weight:normal;font-style:normal;color:#000;white-space:nowrap;">10%</div>
<div style="position:absolute;left:369px;top:823px;width:402px;height:20px;line-height:20px;text-align:right;padding-right:9px;box-sizing:border-box;font-size:16px;font-weight:bold;font-style:normal;color:#000;white-space:nowrap;">2,160</div>
<div style="position:absolute;left:369px;top:843px;width:402px;height:20px;line-height:20px;text-align:right;padding-right:9px;box-sizing:border-box;font-size:16px;font-weight:normal;font-style:normal;color:#000;white-space:nowrap;">5,940</div>
<div style="position:absolute;left:472px;top:743px;width:402px;height:20px;line-height:20px;text-align:right;padding-right:9px;box-sizing:border-box;font-size:16px;font-weight:normal;font-style:normal;color:#000;white-space:nowrap;">24,000</div>
<div style="position:absolute;left:472px;top:763px;width:402px;height:20px;line-height:20px;text-align:right;padding-right:3px;box-sizing:border-box;font-size:16px;font-weight:normal;font-style:normal;color:#000;white-space:nowrap;">10</div>
<div style="position:absolute;left:472px;top:783px;width:402px;height:20px;line-height:20px;text-align:right;padding-right:9px;box-sizing:border-box;font-size:16px;font-weight:normal;font-style:normal;color:#000;white-space:nowrap;">2,400</div>
<div style="position:absolute;left:472px;top:803px;width:402px;height:20px;line-height:20px;text-align:right;padding-right:3px;box-sizing:border-box;font-size:16px;font-weight:normal;font-style:normal;color:#000;white-space:nowrap;">10%</div>
<div style="position:absolute;left:472px;top:823px;width:402px;height:20px;line-height:20px;text-align:right;padding-right:9px;box-sizing:border-box;font-size:16px;font-weight:bold;font-style:normal;color:#000;white-space:nowrap;">2,160</div>
<div style="position:absolute;left:472px;top:843px;width:402px;height:20px;line-height:20px;text-align:right;padding-right:9px;box-sizing:border-box;font-size:16px;font-weight:normal;font-style:normal;color:#000;white-space:nowrap;">8,100</div>
<div style="position:absolute;left:575px;top:743px;width:402px;height:20px;line-height:20px;text-align:right;padding-right:9px;box-sizing:border-box;font-size:16px;font-weight:normal;font-style:normal;color:#000;white-space:nowrap;">24,000</div>
<div style="position:absolute;left:575px;top:763px;width:402px;height:20px;line-height:20px;text-align:right;padding-right:3px;box-sizing:border-box;font-size:16px;font-weight:normal;font-style:normal;color:#000;white-space:nowrap;">10</div>
<div style="position:absolute;left:575px;top:783px;width:402px;height:20px;line-height:20px;text-align:right;padding-right:9px;box-sizing:border-box;font-size:16px;font-weight:normal;font-style:normal;color:#000;white-space:nowrap;">2,400</div>
<div style="position:absolute;left:575px;top:803px;width:402px;height:20px;line-height:20px;text-align:right;padding-right:3px;box-sizing:border-box;font-size:16px;font-weight:normal;font-style:normal;color:#000;white-space:nowrap;">10%</div>
<div style="position:absolute;left:575px;top:823px;width:402px;height:20px;line-height:20px;text-align:right;padding-right:9px;box-sizing:border-box;font-size:16px;font-weight:bold;font-style:normal;color:#000;white-space:nowrap;">2,160</div>
<div style="position:absolute;left:575px;top:843px;width:402px;height:20px;line-height:20px;text-align:right;padding-right:9px;box-sizing:border-box;font-size:16px;font-weight:normal;font-style:normal;color:#000;white-space:nowrap;">10,260</div>
<div style="position:absolute;left:462px;top:823px;width:516px;height:1px;background:#808080;"></div>
<div style="position:absolute;left:1005px;top:823px;width:867px;height:1px;background:#808080;"></div>
<div style="position:absolute;left:705px;top:745px;width:383px;height:20px;line-height:20px;text-align:right;padding-right:27px;box-sizing:border-box;font-size:16px;font-weight:normal;font-style:normal;color:#000;white-space:nowrap;">-</div>
<div style="position:absolute;left:705px;top:765px;width:383px;height:20px;line-height:20px;text-align:right;padding-right:27px;box-sizing:border-box;font-size:16px;font-weight:normal;font-style:normal;color:#000;white-space:nowrap;">-</div>
<div style="position:absolute;left:705px;top:785px;width:383px;height:20px;line-height:20px;text-align:right;padding-right:27px;box-sizing:border-box;font-size:16px;font-weight:normal;font-style:normal;color:#000;white-space:nowrap;">-</div>
<div style="position:absolute;left:705px;top:805px;width:383px;height:20px;line-height:20px;text-align:right;padding-right:3px;box-sizing:border-box;font-size:16px;font-weight:normal;font-style:normal;color:#000;white-space:nowrap;">0%</div>
<div style="position:absolute;left:705px;top:825px;width:383px;height:20px;line-height:20px;text-align:right;padding-right:27px;box-sizing:border-box;font-size:16px;font-weight:bold;font-style:normal;color:#000;white-space:nowrap;">-</div>
<div style="position:absolute;left:705px;top:845px;width:383px;height:20px;line-height:20px;text-align:right;padding-right:27px;box-sizing:border-box;font-size:16px;font-weight:normal;font-style:normal;color:#000;white-space:nowrap;">-</div>
<div style="position:absolute;left:789px;top:745px;width:385px;height:20px;line-height:20px;text-align:right;padding-right:27px;box-sizing:border-box;font-size:16px;font-weight:normal;font-style:normal;color:#000;white-space:nowrap;">-</div>
<div style="position:absolute;left:789px;top:765px;width:385px;height:20px;line-height:20px;text-align:right;padding-right:27px;box-sizing:border-box;font-size:16px;font-weight:normal;font-style:normal;color:#000;white-space:nowrap;">-</div>
<div style="position:absolute;left:789px;top:785px;width:385px;height:20px;line-height:20px;text-align:right;padding-right:27px;box-sizing:border-box;font-size:16px;font-weight:normal;font-style:normal;color:#000;white-space:nowrap;">-</div>
<div style="position:absolute;left:789px;top:805px;width:385px;height:20px;line-height:20px;text-align:right;padding-right:3px;box-sizing:border-box;font-size:16px;font-weight:normal;font-style:normal;color:#000;white-space:nowrap;">0%</div>
<div style="position:absolute;left:789px;top:825px;width:385px;height:20px;line-height:20px;text-align:right;padding-right:27px;box-sizing:border-box;font-size:16px;font-weight:bold;font-style:normal;color:#000;white-space:nowrap;">-</div>
<div style="position:absolute;left:789px;top:845px;width:385px;height:20px;line-height:20px;text-align:right;padding-right:27px;box-sizing:border-box;font-size:16px;font-weight:normal;font-style:normal;color:#000;white-space:nowrap;">-</div>
<div style="position:absolute;left:875px;top:745px;width:393px;height:20px;line-height:20px;text-align:right;padding-right:27px;box-sizing:border-box;font-size:16px;font-weight:normal;font-style:normal;color:#000;white-space:nowrap;">-</div>
<div style="position:absolute;left:875px;top:765px;width:393px;height:20px;line-height:20px;text-align:right;padding-right:27px;box-sizing:border-box;font-size:16px;font-weight:normal;font-style:normal;color:#000;white-space:nowrap;">-</div>
<div style="position:absolute;left:875px;top:785px;width:393px;height:20px;line-height:20px;text-align:right;padding-right:27px;box-sizing:border-box;font-size:16px;font-weight:normal;font-style:normal;color:#000;white-space:nowrap;">-</div>
<div style="position:absolute;left:875px;top:805px;width:393px;height:20px;line-height:20px;text-align:right;padding-right:3px;box-sizing:border-box;font-size:16px;font-weight:normal;font-style:normal;color:#000;white-space:nowrap;">0%</div>
<div style="position:absolute;left:875px;top:825px;width:393px;height:20px;line-height:20px;text-align:right;padding-right:27px;box-sizing:border-box;font-size:16px;font-weight:bold;font-style:normal;color:#000;white-space:nowrap;">-</div>
<div style="position:absolute;left:875px;top:845px;width:393px;height:20px;line-height:20px;text-align:right;padding-right:27px;box-sizing:border-box;font-size:16px;font-weight:normal;font-style:normal;color:#000;white-space:nowrap;">-</div>
<div style="position:absolute;left:969px;top:745px;width:402px;height:20px;line-height:20px;text-align:right;padding-right:9px;box-sizing:border-box;font-size:16px;font-weight:normal;font-style:normal;color:#000;white-space:nowrap;">2,000</div>
<div style="position:absolute;left:969px;top:765px;width:402px;height:20px;line-height:20px;text-align:right;padding-right:9px;box-sizing:border-box;font-size:16px;font-weight:normal;font-style:normal;color:#000;white-space:nowrap;">10</div>
<div style="position:absolute;left:969px;top:785px;width:402px;height:20px;line-height:20px;text-align:right;padding-right:9px;box-sizing:border-box;font-size:16px;font-weight:normal;font-style:normal;color:#000;white-space:nowrap;">200</div>
<div style="position:absolute;left:969px;top:805px;width:402px;height:20px;line-height:20px;text-align:right;padding-right:3px;box-sizing:border-box;font-size:16px;font-weight:normal;font-style:normal;color:#000;white-space:nowrap;">10%</div>
<div style="position:absolute;left:969px;top:825px;width:402px;height:20px;line-height:20px;text-align:right;padding-right:9px;box-sizing:border-box;font-size:16px;font-weight:bold;font-style:normal;color:#000;white-space:nowrap;">180</div>
<div style="position:absolute;left:969px;top:845px;width:402px;height:20px;line-height:20px;text-align:right;padding-right:9px;box-sizing:border-box;font-size:16px;font-weight:normal;font-style:normal;color:#000;white-space:nowrap;">180</div>
<div style="position:absolute;left:1072px;top:745px;width:402px;height:20px;line-height:20px;text-align:right;padding-right:9px;box-sizing:border-box;font-size:16px;font-weight:normal;font-style:normal;color:#000;white-space:nowrap;">2,000</div>
<div style="position:absolute;left:1072px;top:765px;width:402px;height:20px;line-height:20px;text-align:right;padding-right:9px;box-sizing:border-box;font-size:16px;font-weight:normal;font-style:normal;color:#000;white-space:nowrap;">10</div>
<div style="position:absolute;left:1072px;top:785px;width:402px;height:20px;line-height:20px;text-align:right;padding-right:9px;box-sizing:border-box;font-size:16px;font-weight:normal;font-style:normal;color:#000;white-space:nowrap;">200</div>
<div style="position:absolute;left:1072px;top:805px;width:402px;height:20px;line-height:20px;text-align:right;padding-right:3px;box-sizing:border-box;font-size:16px;font-weight:normal;font-style:normal;color:#000;white-space:nowrap;">10%</div>
<div style="position:absolute;left:1072px;top:825px;width:402px;height:20px;line-height:20px;text-align:right;padding-right:9px;box-sizing:border-box;font-size:16px;font-weight:bold;font-style:normal;color:#000;white-space:nowrap;">180</div>
<div style="position:absolute;left:1072px;top:845px;width:402px;height:20px;line-height:20px;text-align:right;padding-right:9px;box-sizing:border-box;font-size:16px;font-weight:normal;font-style:normal;color:#000;white-space:nowrap;">360</div>
<div style="position:absolute;left:1175px;top:745px;width:402px;height:20px;line-height:20px;text-align:right;padding-right:9px;box-sizing:border-box;font-size:16px;font-weight:normal;font-style:normal;color:#000;white-space:nowrap;">2,000</div>
<div style="position:absolute;left:1175px;top:765px;width:402px;height:20px;line-height:20px;text-align:right;padding-right:9px;box-sizing:border-box;font-size:16px;font-weight:normal;font-style:normal;color:#000;white-space:nowrap;">10</div>
<div style="position:absolute;left:1175px;top:785px;width:402px;height:20px;line-height:20px;text-align:right;padding-right:9px;box-sizing:border-box;font-size:16px;font-weight:normal;font-style:normal;color:#000;white-space:nowrap;">200</div>
<div style="position:absolute;left:1175px;top:805px;width:402px;height:20px;line-height:20px;text-align:right;padding-right:3px;box-sizing:border-box;font-size:16px;font-weight:normal;font-style:normal;color:#000;white-space:nowrap;">10%</div>
<div style="position:absolute;left:1175px;top:825px;width:402px;height:20px;line-height:20px;text-align:right;padding-right:9px;box-sizing:border-box;font-size:16px;font-weight:bold;font-style:normal;color:#000;white-space:nowrap;">180</div>
<div style="position:absolute;left:1175px;top:845px;width:402px;height:20px;line-height:20px;text-align:right;padding-right:9px;box-sizing:border-box;font-size:16px;font-weight:normal;font-style:normal;color:#000;white-space:nowrap;">540</div>
<div style="position:absolute;left:1278px;top:745px;width:402px;height:20px;line-height:20px;text-align:right;padding-right:9px;box-sizing:border-box;font-size:16px;font-weight:normal;font-style:normal;color:#000;white-space:nowrap;">2,000</div>
<div style="position:absolute;left:1278px;top:765px;width:402px;height:20px;line-height:20px;text-align:right;padding-right:9px;box-sizing:border-box;font-size:16px;font-weight:normal;font-style:normal;color:#000;white-space:nowrap;">10</div>
<div style="position:absolute;left:1278px;top:785px;width:402px;height:20px;line-height:20px;text-align:right;padding-right:9px;box-sizing:border-box;font-size:16px;font-weight:normal;font-style:normal;color:#000;white-space:nowrap;">200</div>
<div style="position:absolute;left:1278px;top:805px;width:402px;height:20px;line-height:20px;text-align:right;padding-right:3px;box-sizing:border-box;font-size:16px;font-weight:normal;font-style:normal;color:#000;white-space:nowrap;">10%</div>
<div style="position:absolute;left:1278px;top:825px;width:402px;height:20px;line-height:20px;text-align:right;padding-right:9px;box-sizing:border-box;font-size:16px;font-weight:bold;font-style:normal;color:#000;white-space:nowrap;">180</div>
<div style="position:absolute;left:1278px;top:845px;width:402px;height:20px;line-height:20px;text-align:right;padding-right:9px;box-sizing:border-box;font-size:16px;font-weight:normal;font-style:normal;color:#000;white-space:nowrap;">720</div>
<div style="position:absolute;left:1381px;top:745px;width:402px;height:20px;line-height:20px;text-align:right;padding-right:9px;box-sizing:border-box;font-size:16px;font-weight:normal;font-style:normal;color:#000;white-space:nowrap;">2,000</div>
<div style="position:absolute;left:1381px;top:765px;width:402px;height:20px;line-height:20px;text-align:right;padding-right:9px;box-sizing:border-box;font-size:16px;font-weight:normal;font-style:normal;color:#000;white-space:nowrap;">10</div>
<div style="position:absolute;left:1381px;top:785px;width:402px;height:20px;line-height:20px;text-align:right;padding-right:9px;box-sizing:border-box;font-size:16px;font-weight:normal;font-style:normal;color:#000;white-space:nowrap;">200</div>
<div style="position:absolute;left:1381px;top:805px;width:402px;height:20px;line-height:20px;text-align:right;padding-right:3px;box-sizing:border-box;font-size:16px;font-weight:normal;font-style:normal;color:#000;white-space:nowrap;">10%</div>
<div style="position:absolute;left:1381px;top:825px;width:402px;height:20px;line-height:20px;text-align:right;padding-right:9px;box-sizing:border-box;font-size:16px;font-weight:bold;font-style:normal;color:#000;white-space:nowrap;">180</div>
<div style="position:absolute;left:1381px;top:845px;width:402px;height:20px;line-height:20px;text-align:right;padding-right:9px;box-sizing:border-box;font-size:16px;font-weight:normal;font-style:normal;color:#000;white-space:nowrap;">900</div>
<div style="position:absolute;left:1484px;top:745px;width:402px;height:20px;line-height:20px;text-align:right;padding-right:9px;box-sizing:border-box;font-size:16px;font-weight:normal;font-style:normal;color:#000;white-space:nowrap;">2,000</div>
<div style="position:absolute;left:1484px;top:765px;width:402px;height:20px;line-height:20px;text-align:right;padding-right:9px;box-sizing:border-box;font-size:16px;font-weight:normal;font-style:normal;color:#000;white-space:nowrap;">10</div>
<div style="position:absolute;left:1484px;top:785px;width:402px;height:20px;line-height:20px;text-align:right;padding-right:9px;box-sizing:border-box;font-size:16px;font-weight:normal;font-style:normal;color:#000;white-space:nowrap;">200</div>
<div style="position:absolute;left:1484px;top:805px;width:402px;height:20px;line-height:20px;text-align:right;padding-right:3px;box-sizing:border-box;font-size:16px;font-weight:normal;font-style:normal;color:#000;white-space:nowrap;">10%</div>
<div style="position:absolute;left:1484px;top:825px;width:402px;height:20px;line-height:20px;text-align:right;padding-right:9px;box-sizing:border-box;font-size:16px;font-weight:bold;font-style:normal;color:#000;white-space:nowrap;">180</div>
<div style="position:absolute;left:1484px;top:845px;width:402px;height:20px;line-height:20px;text-align:right;padding-right:9px;box-sizing:border-box;font-size:16px;font-weight:normal;font-style:normal;color:#000;white-space:nowrap;">1,080</div>
<div style="position:absolute;left:0px;top:0px;width:1872px;height:31px;background:#FFFFFF;"></div>
<div style="position:absolute;left:12px;top:8px;width:15px;height:22px;background:#E1E1E1;"></div>
<div style="position:absolute;left:27px;top:8px;width:1px;height:23px;background:#DADADA;"></div>
<div style="position:absolute;left:13px;top:10px;width:14px;height:22px;line-height:23px;text-align:center;box-sizing:border-box;font-size:16px;font-weight:bold;font-style:normal;color:#217346;white-space:nowrap;">A</div>
<div style="position:absolute;left:348px;top:8px;width:1px;height:23px;background:#DADADA;"></div>
<div style="position:absolute;left:28px;top:10px;width:320px;height:22px;line-height:23px;text-align:center;box-sizing:border-box;font-size:16px;font-weight:normal;font-style:normal;color:#444444;white-space:nowrap;">B</div>
<div style="position:absolute;left:397px;top:8px;width:1px;height:23px;background:#DADADA;"></div>
<div style="position:absolute;left:349px;top:10px;width:48px;height:22px;line-height:23px;text-align:center;box-sizing:border-box;font-size:16px;font-weight:normal;font-style:normal;color:#444444;white-space:nowrap;">C</div>
<div style="position:absolute;left:462px;top:8px;width:1px;height:23px;background:#DADADA;"></div>
<div style="position:absolute;left:398px;top:10px;width:64px;height:22px;line-height:23px;text-align:center;box-sizing:border-box;font-size:16px;font-weight:normal;font-style:normal;color:#444444;white-space:nowrap;">D</div>
<div style="position:absolute;left:565px;top:8px;width:1px;height:23px;background:#DADADA;"></div>
<div style="position:absolute;left:463px;top:10px;width:102px;height:22px;line-height:23px;text-align:center;box-sizing:border-box;font-size:16px;font-weight:normal;font-style:normal;color:#444444;white-space:nowrap;">E</div>
<div style="position:absolute;left:668px;top:8px;width:1px;height:23px;background:#DADADA;"></div>
<div style="position:absolute;left:566px;top:10px;width:102px;height:22px;line-height:23px;text-align:center;box-sizing:border-box;font-size:16px;font-weight:normal;font-style:normal;color:#444444;white-space:nowrap;">F</div>
<div style="position:absolute;left:771px;top:8px;width:1px;height:23px;background:#DADADA;"></div>
<div style="position:absolute;left:669px;top:10px;width:102px;height:22px;line-height:23px;text-align:center;box-sizing:border-box;font-size:16px;font-weight:normal;font-style:normal;color:#444444;white-space:nowrap;">G</div>
<div style="position:absolute;left:874px;top:8px;width:1px;height:23px;background:#DADADA;"></div>
<div style="position:absolute;left:772px;top:10px;width:102px;height:22px;line-height:23px;text-align:center;box-sizing:border-box;font-size:16px;font-weight:normal;font-style:normal;color:#444444;white-space:nowrap;">H</div>
<div style="position:absolute;left:977px;top:8px;width:1px;height:23px;background:#DADADA;"></div>
<div style="position:absolute;left:875px;top:10px;width:102px;height:22px;line-height:23px;text-align:center;box-sizing:border-box;font-size:16px;font-weight:normal;font-style:normal;color:#444444;white-space:nowrap;">I</div>
<div style="position:absolute;left:1004px;top:8px;width:1px;height:23px;background:#DADADA;"></div>
<div style="position:absolute;left:978px;top:10px;width:26px;height:22px;line-height:23px;text-align:center;box-sizing:border-box;font-size:16px;font-weight:normal;font-style:normal;color:#444444;white-space:nowrap;">J</div>
<div style="position:absolute;left:1088px;top:8px;width:1px;height:23px;background:#DADADA;"></div>
<div style="position:absolute;left:1005px;top:10px;width:83px;height:22px;line-height:23px;text-align:center;box-sizing:border-box;font-size:16px;font-weight:normal;font-style:normal;color:#444444;white-space:nowrap;">K</div>
<div style="position:absolute;left:1174px;top:8px;width:1px;height:23px;background:#DADADA;"></div>
<div style="position:absolute;left:1089px;top:10px;width:85px;height:22px;line-height:23px;text-align:center;box-sizing:border-box;font-size:16px;font-weight:normal;font-style:normal;color:#444444;white-space:nowrap;">L</div>
<div style="position:absolute;left:1268px;top:8px;width:1px;height:23px;background:#DADADA;"></div>
<div style="position:absolute;left:1175px;top:10px;width:93px;height:22px;line-height:23px;text-align:center;box-sizing:border-box;font-size:16px;font-weight:normal;font-style:normal;color:#444444;white-space:nowrap;">M</div>
<div style="position:absolute;left:1371px;top:8px;width:1px;height:23px;background:#DADADA;"></div>
<div style="position:absolute;left:1269px;top:10px;width:102px;height:22px;line-height:23px;text-align:center;box-sizing:border-box;font-size:16px;font-weight:normal;font-style:normal;color:#444444;white-space:nowrap;">N</div>
<div style="position:absolute;left:1474px;top:8px;width:1px;height:23px;background:#DADADA;"></div>
<div style="position:absolute;left:1372px;top:10px;width:102px;height:22px;line-height:23px;text-align:center;box-sizing:border-box;font-size:16px;font-weight:normal;font-style:normal;color:#444444;white-space:nowrap;">O</div>
<div style="position:absolute;left:1577px;top:8px;width:1px;height:23px;background:#DADADA;"></div>
<div style="position:absolute;left:1475px;top:10px;width:102px;height:22px;line-height:23px;text-align:center;box-sizing:border-box;font-size:16px;font-weight:normal;font-style:normal;color:#444444;white-space:nowrap;">P</div>
<div style="position:absolute;left:1680px;top:8px;width:1px;height:23px;background:#DADADA;"></div>
<div style="position:absolute;left:1578px;top:10px;width:102px;height:22px;line-height:23px;text-align:center;box-sizing:border-box;font-size:16px;font-weight:normal;font-style:normal;color:#444444;white-space:nowrap;">Q</div>
<div style="position:absolute;left:1783px;top:8px;width:1px;height:23px;background:#DADADA;"></div>
<div style="position:absolute;left:1681px;top:10px;width:102px;height:22px;line-height:23px;text-align:center;box-sizing:border-box;font-size:16px;font-weight:normal;font-style:normal;color:#444444;white-space:nowrap;">R</div>
<div style="position:absolute;left:1784px;top:10px;width:102px;height:22px;line-height:23px;text-align:center;box-sizing:border-box;font-size:16px;font-weight:normal;font-style:normal;color:#444444;white-space:nowrap;">S</div>
<div style="position:absolute;left:12px;top:8px;width:1px;height:23px;background:#C6C6C6;"></div>
<div style="position:absolute;left:0px;top:31px;width:1872px;height:1px;background:#ABABAB;"></div>
<div style="position:absolute;left:-6px;top:12px;width:0;height:0;border-left:15px solid transparent;border-bottom:15px solid #DFDFDF;"></div>
<div style="position:absolute;left:0px;top:32px;width:12px;height:825px;background:#FFFFFF;"></div>
<div style="position:absolute;left:0px;top:32px;width:12px;height:51px;background:#E1E1E1;"></div>
<div style="position:absolute;left:0px;top:83px;width:12px;height:1px;background:#DADADA;"></div>
<div style="position:absolute;left:0px;top:103px;width:12px;height:1px;background:#DADADA;"></div>
<div style="position:absolute;left:0px;top:123px;width:12px;height:1px;background:#DADADA;"></div>
<div style="position:absolute;left:0px;top:143px;width:12px;height:1px;background:#DADADA;"></div>
<div style="position:absolute;left:0px;top:163px;width:12px;height:1px;background:#DADADA;"></div>
<div style="position:absolute;left:0px;top:183px;width:12px;height:1px;background:#DADADA;"></div>
<div style="position:absolute;left:0px;top:203px;width:12px;height:1px;background:#DADADA;"></div>
<div style="position:absolute;left:0px;top:223px;width:12px;height:1px;background:#DADADA;"></div>
<div style="position:absolute;left:0px;top:243px;width:12px;height:1px;background:#DADADA;"></div>
<div style="position:absolute;left:0px;top:263px;width:12px;height:1px;background:#DADADA;"></div>
<div style="position:absolute;left:0px;top:283px;width:12px;height:1px;background:#DADADA;"></div>
<div style="position:absolute;left:0px;top:303px;width:12px;height:1px;background:#DADADA;"></div>
<div style="position:absolute;left:0px;top:323px;width:12px;height:1px;background:#DADADA;"></div>
<div style="position:absolute;left:0px;top:343px;width:12px;height:1px;background:#DADADA;"></div>
<div style="position:absolute;left:0px;top:363px;width:12px;height:1px;background:#DADADA;"></div>
<div style="position:absolute;left:0px;top:383px;width:12px;height:1px;background:#DADADA;"></div>
<div style="position:absolute;left:0px;top:403px;width:12px;height:1px;background:#DADADA;"></div>
<div style="position:absolute;left:0px;top:423px;width:12px;height:1px;background:#DADADA;"></div>
<div style="position:absolute;left:0px;top:443px;width:12px;height:1px;background:#DADADA;"></div>
<div style="position:absolute;left:0px;top:463px;width:12px;height:1px;background:#DADADA;"></div>
<div style="position:absolute;left:0px;top:483px;width:12px;height:1px;background:#DADADA;"></div>
<div style="position:absolute;left:0px;top:503px;width:12px;height:1px;background:#DADADA;"></div>
<div style="position:absolute;left:0px;top:523px;width:12px;height:1px;background:#DADADA;"></div>
<div style="position:absolute;left:0px;top:543px;width:12px;height:1px;background:#DADADA;"></div>
<div style="position:absolute;left:0px;top:563px;width:12px;height:1px;background:#DADADA;"></div>
<div style="position:absolute;left:0px;top:583px;width:12px;height:1px;background:#DADADA;"></div>
<div style="position:absolute;left:0px;top:603px;width:12px;height:1px;background:#DADADA;"></div>
<div style="position:absolute;left:0px;top:623px;width:12px;height:1px;background:#DADADA;"></div>
<div style="position:absolute;left:0px;top:643px;width:12px;height:1px;background:#DADADA;"></div>
<div style="position:absolute;left:0px;top:663px;width:12px;height:1px;background:#DADADA;"></div>
<div style="position:absolute;left:0px;top:683px;width:12px;height:1px;background:#DADADA;"></div>
<div style="position:absolute;left:0px;top:703px;width:12px;height:1px;background:#DADADA;"></div>
<div style="position:absolute;left:0px;top:723px;width:12px;height:1px;background:#DADADA;"></div>
<div style="position:absolute;left:0px;top:743px;width:12px;height:1px;background:#DADADA;"></div>
<div style="position:absolute;left:0px;top:763px;width:12px;height:1px;background:#DADADA;"></div>
<div style="position:absolute;left:0px;top:783px;width:12px;height:1px;background:#DADADA;"></div>
<div style="position:absolute;left:0px;top:803px;width:12px;height:1px;background:#DADADA;"></div>
<div style="position:absolute;left:0px;top:823px;width:12px;height:1px;background:#DADADA;"></div>
<div style="position:absolute;left:0px;top:843px;width:12px;height:1px;background:#DADADA;"></div>
<div style="position:absolute;left:0;top:31px;width:12px;height:52px;overflow:hidden;"><div style="position:absolute;left:-30px;width:51px;text-align:center;top:0;height:52px;line-height:52px;font-size:15px;color:#444;white-space:nowrap;">1</div></div>
<div style="position:absolute;left:0;top:83px;width:12px;height:20px;overflow:hidden;"><div style="position:absolute;left:-30px;width:51px;text-align:center;top:0;height:20px;line-height:20px;font-size:15px;color:#444;white-space:nowrap;">2</div></div>
<div style="position:absolute;left:0;top:103px;width:12px;height:20px;overflow:hidden;"><div style="position:absolute;left:-30px;width:51px;text-align:center;top:0;height:20px;line-height:20px;font-size:15px;color:#444;white-space:nowrap;">3</div></div>
<div style="position:absolute;left:0;top:123px;width:12px;height:20px;overflow:hidden;"><div style="position:absolute;left:-30px;width:51px;text-align:center;top:0;height:20px;line-height:20px;font-size:15px;color:#444;white-space:nowrap;">4</div></div>
<div style="position:absolute;left:0;top:143px;width:12px;height:20px;overflow:hidden;"><div style="position:absolute;left:-30px;width:51px;text-align:center;top:0;height:20px;line-height:20px;font-size:15px;color:#444;white-space:nowrap;">5</div></div>
<div style="position:absolute;left:0;top:163px;width:12px;height:20px;overflow:hidden;"><div style="position:absolute;left:-30px;width:51px;text-align:center;top:0;height:20px;line-height:20px;font-size:15px;color:#444;white-space:nowrap;">6</div></div>
<div style="position:absolute;left:0;top:183px;width:12px;height:20px;overflow:hidden;"><div style="position:absolute;left:-30px;width:51px;text-align:center;top:0;height:20px;line-height:20px;font-size:15px;color:#444;white-space:nowrap;">7</div></div>
<div style="position:absolute;left:0;top:203px;width:12px;height:20px;overflow:hidden;"><div style="position:absolute;left:-30px;width:51px;text-align:center;top:0;height:20px;line-height:20px;font-size:15px;color:#444;white-space:nowrap;">8</div></div>
<div style="position:absolute;left:0;top:223px;width:12px;height:20px;overflow:hidden;"><div style="position:absolute;left:-30px;width:51px;text-align:center;top:0;height:20px;line-height:20px;font-size:15px;color:#444;white-space:nowrap;">9</div></div>
<div style="position:absolute;left:0;top:243px;width:12px;height:20px;overflow:hidden;"><div style="position:absolute;left:-30px;width:51px;text-align:center;top:0;height:20px;line-height:20px;font-size:15px;color:#444;white-space:nowrap;">10</div></div>
<div style="position:absolute;left:0;top:263px;width:12px;height:20px;overflow:hidden;"><div style="position:absolute;left:-30px;width:51px;text-align:center;top:0;height:20px;line-height:20px;font-size:15px;color:#444;white-space:nowrap;">11</div></div>
<div style="position:absolute;left:0;top:283px;width:12px;height:20px;overflow:hidden;"><div style="position:absolute;left:-30px;width:51px;text-align:center;top:0;height:20px;line-height:20px;font-size:15px;color:#444;white-space:nowrap;">12</div></div>
<div style="position:absolute;left:0;top:303px;width:12px;height:20px;overflow:hidden;"><div style="position:absolute;left:-30px;width:51px;text-align:center;top:0;height:20px;line-height:20px;font-size:15px;color:#444;white-space:nowrap;">13</div></div>
<div style="position:absolute;left:0;top:323px;width:12px;height:20px;overflow:hidden;"><div style="position:absolute;left:-30px;width:51px;text-align:center;top:0;height:20px;line-height:20px;font-size:15px;color:#444;white-space:nowrap;">14</div></div>
<div style="position:absolute;left:0;top:343px;width:12px;height:20px;overflow:hidden;"><div style="position:absolute;left:-30px;width:51px;text-align:center;top:0;height:20px;line-height:20px;font-size:15px;color:#444;white-space:nowrap;">15</div></div>
<div style="position:absolute;left:0;top:363px;width:12px;height:20px;overflow:hidden;"><div style="position:absolute;left:-30px;width:51px;text-align:center;top:0;height:20px;line-height:20px;font-size:15px;color:#444;white-space:nowrap;">16</div></div>
<div style="position:absolute;left:0;top:383px;width:12px;height:20px;overflow:hidden;"><div style="position:absolute;left:-30px;width:51px;text-align:center;top:0;height:20px;line-height:20px;font-size:15px;color:#444;white-space:nowrap;">17</div></div>
<div style="position:absolute;left:0;top:403px;width:12px;height:20px;overflow:hidden;"><div style="position:absolute;left:-30px;width:51px;text-align:center;top:0;height:20px;line-height:20px;font-size:15px;color:#444;white-space:nowrap;">18</div></div>
<div style="position:absolute;left:0;top:423px;width:12px;height:20px;overflow:hidden;"><div style="position:absolute;left:-30px;width:51px;text-align:center;top:0;height:20px;line-height:20px;font-size:15px;color:#444;white-space:nowrap;">19</div></div>
<div style="position:absolute;left:0;top:443px;width:12px;height:20px;overflow:hidden;"><div style="position:absolute;left:-30px;width:51px;text-align:center;top:0;height:20px;line-height:20px;font-size:15px;color:#444;white-space:nowrap;">20</div></div>
<div style="position:absolute;left:0;top:463px;width:12px;height:20px;overflow:hidden;"><div style="position:absolute;left:-30px;width:51px;text-align:center;top:0;height:20px;line-height:20px;font-size:15px;color:#444;white-space:nowrap;">21</div></div>
<div style="position:absolute;left:0;top:483px;width:12px;height:20px;overflow:hidden;"><div style="position:absolute;left:-30px;width:51px;text-align:center;top:0;height:20px;line-height:20px;font-size:15px;color:#444;white-space:nowrap;">22</div></div>
<div style="position:absolute;left:0;top:503px;width:12px;height:20px;overflow:hidden;"><div style="position:absolute;left:-30px;width:51px;text-align:center;top:0;height:20px;line-height:20px;font-size:15px;color:#444;white-space:nowrap;">23</div></div>
<div style="position:absolute;left:0;top:523px;width:12px;height:20px;overflow:hidden;"><div style="position:absolute;left:-30px;width:51px;text-align:center;top:0;height:20px;line-height:20px;font-size:15px;color:#444;white-space:nowrap;">24</div></div>
<div style="position:absolute;left:0;top:543px;width:12px;height:20px;overflow:hidden;"><div style="position:absolute;left:-30px;width:51px;text-align:center;top:0;height:20px;line-height:20px;font-size:15px;color:#444;white-space:nowrap;">25</div></div>
<div style="position:absolute;left:0;top:563px;width:12px;height:20px;overflow:hidden;"><div style="position:absolute;left:-30px;width:51px;text-align:center;top:0;height:20px;line-height:20px;font-size:15px;color:#444;white-space:nowrap;">26</div></div>
<div style="position:absolute;left:0;top:583px;width:12px;height:20px;overflow:hidden;"><div style="position:absolute;left:-30px;width:51px;text-align:center;top:0;height:20px;line-height:20px;font-size:15px;color:#444;white-space:nowrap;">27</div></div>
<div style="position:absolute;left:0;top:603px;width:12px;height:20px;overflow:hidden;"><div style="position:absolute;left:-30px;width:51px;text-align:center;top:0;height:20px;line-height:20px;font-size:15px;color:#444;white-space:nowrap;">28</div></div>
<div style="position:absolute;left:0;top:623px;width:12px;height:20px;overflow:hidden;"><div style="position:absolute;left:-30px;width:51px;text-align:center;top:0;height:20px;line-height:20px;font-size:15px;color:#444;white-space:nowrap;">29</div></div>
<div style="position:absolute;left:0;top:643px;width:12px;height:20px;overflow:hidden;"><div style="position:absolute;left:-30px;width:51px;text-align:center;top:0;height:20px;line-height:20px;font-size:15px;color:#444;white-space:nowrap;">30</div></div>
<div style="position:absolute;left:0;top:663px;width:12px;height:20px;overflow:hidden;"><div style="position:absolute;left:-30px;width:51px;text-align:center;top:0;height:20px;line-height:20px;font-size:15px;color:#444;white-space:nowrap;">31</div></div>
<div style="position:absolute;left:0;top:683px;width:12px;height:20px;overflow:hidden;"><div style="position:absolute;left:-30px;width:51px;text-align:center;top:0;height:20px;line-height:20px;font-size:15px;color:#444;white-space:nowrap;">32</div></div>
<div style="position:absolute;left:0;top:703px;width:12px;height:20px;overflow:hidden;"><div style="position:absolute;left:-30px;width:51px;text-align:center;top:0;height:20px;line-height:20px;font-size:15px;color:#444;white-space:nowrap;">33</div></div>
<div style="position:absolute;left:0;top:723px;width:12px;height:20px;overflow:hidden;"><div style="position:absolute;left:-30px;width:51px;text-align:center;top:0;height:20px;line-height:20px;font-size:15px;color:#444;white-space:nowrap;">34</div></div>
<div style="position:absolute;left:0;top:743px;width:12px;height:20px;overflow:hidden;"><div style="position:absolute;left:-30px;width:51px;text-align:center;top:0;height:20px;line-height:20px;font-size:15px;color:#444;white-space:nowrap;">35</div></div>
<div style="position:absolute;left:0;top:763px;width:12px;height:20px;overflow:hidden;"><div style="position:absolute;left:-30px;width:51px;text-align:center;top:0;height:20px;line-height:20px;font-size:15px;color:#444;white-space:nowrap;">36</div></div>
<div style="position:absolute;left:0;top:783px;width:12px;height:20px;overflow:hidden;"><div style="position:absolute;left:-30px;width:51px;text-align:center;top:0;height:20px;line-height:20px;font-size:15px;color:#444;white-space:nowrap;">37</div></div>
<div style="position:absolute;left:0;top:803px;width:12px;height:20px;overflow:hidden;"><div style="position:absolute;left:-30px;width:51px;text-align:center;top:0;height:20px;line-height:20px;font-size:15px;color:#444;white-space:nowrap;">38</div></div>
<div style="position:absolute;left:0;top:823px;width:12px;height:20px;overflow:hidden;"><div style="position:absolute;left:-30px;width:51px;text-align:center;top:0;height:20px;line-height:20px;font-size:15px;color:#444;white-space:nowrap;">39</div></div>
<div style="position:absolute;left:0;top:843px;width:12px;height:20px;overflow:hidden;"><div style="position:absolute;left:-30px;width:51px;text-align:center;top:0;height:20px;line-height:20px;font-size:15px;color:#444;white-space:nowrap;">40</div></div>
<div style="position:absolute;left:12px;top:32px;width:1px;height:825px;background:#ABABAB;"></div>
<div style="position:absolute;left:1004px;top:8px;width:1px;height:849px;background:#9E9E9E;"></div>
<div style="position:absolute;left:0px;top:223px;width:1872px;height:1px;background:#9E9E9E;"></div>
<div style="position:absolute;left:11px;top:30px;width:18px;height:55px;background:#217346;"></div>
<div style="position:absolute;left:13px;top:32px;width:14px;height:51px;background:#FFFFFF;"></div>
<div style="position:absolute;left:14px;top:33px;width:12px;height:49px;background:#2F5597;"></div>
<div style="position:absolute;left:24px;top:80px;width:7px;height:7px;background:#FFFFFF;"></div>
<div style="position:absolute;left:25px;top:81px;width:5px;height:5px;background:#217346;"></div>
</div>
<div style="position:absolute;left:1872px;top:31px;width:1px;height:827px;background:#ABABAB;"></div>
<div style="position:absolute;left:0px;top:857px;width:1873px;height:1px;background:#ABABAB;"></div>
<div style="position:absolute;left:1873px;top:0px;width:24px;height:861px;background:#FFFFFF;"></div>
<div style="position:absolute;left:1876px;top:29px;width:19px;height:810px;background:#F1F1F1;"></div>
<div style="position:absolute;left:1876px;top:10px;width:19px;height:19px;background:#FFFFFF;border:1px solid #C8C8C8;box-sizing:border-box;"></div>
<div style="position:absolute;left:1876px;top:29px;width:19px;height:28px;background:#FFFFFF;border:1px solid #ABABAB;box-sizing:border-box;"></div>
<div style="position:absolute;left:1876px;top:838px;width:19px;height:19px;background:#FFFFFF;border:1px solid #C8C8C8;box-sizing:border-box;"></div>
<div style="position:absolute;left:1881px;top:17px;width:0;height:0;border-left:4.5px solid transparent;border-right:4.5px solid transparent;border-bottom:5px solid #777;"></div>
<div style="position:absolute;left:1881px;top:845px;width:0;height:0;border-left:4.5px solid transparent;border-right:4.5px solid transparent;border-top:5px solid #777;"></div>
<div style="position:absolute;left:0px;top:858px;width:1897px;height:28px;background:#F5F5F5;"></div>
<div style="position:absolute;left:6px;top:866px;width:0;height:0;border-top:5px solid transparent;border-bottom:5px solid transparent;border-right:5px solid #C0C0C0;"></div>
<div style="position:absolute;left:35px;top:866px;width:0;height:0;border-top:5px solid transparent;border-bottom:5px solid transparent;border-left:5px solid #217346;"></div>
<div style="position:absolute;left:81px;top:861px;width:1px;height:21px;background:#BDBDBD;"></div>
<div style="position:absolute;left:145px;top:861px;width:1px;height:21px;background:#BDBDBD;"></div>
<div style="position:absolute;left:208px;top:861px;width:1px;height:21px;background:#BDBDBD;"></div>
<div style="position:absolute;left:337px;top:861px;width:1px;height:21px;background:#BDBDBD;"></div>
<div style="position:absolute;left:1041px;top:861px;width:1px;height:21px;background:#BDBDBD;"></div>
<div style="position:absolute;left:93.5px;top:855px;width:300px;height:26px;line-height:26px;text-align:left;padding-left:0px;box-sizing:border-box;font-size:16.4px;font-weight:normal;font-style:normal;color:#444;white-space:nowrap;transform:scaleX(1.1);transform-origin:0 0;">Logo</div>
<div style="position:absolute;left:158px;top:855px;width:300px;height:26px;line-height:26px;text-align:left;padding-left:0px;box-sizing:border-box;font-size:16.4px;font-weight:normal;font-style:normal;color:#444;white-space:nowrap;transform:scaleX(1.148);transform-origin:0 0;">Intro</div>
<div style="position:absolute;left:223px;top:855px;width:300px;height:26px;line-height:26px;text-align:left;padding-left:0px;box-sizing:border-box;font-size:16.4px;font-weight:normal;font-style:normal;color:#444;white-space:nowrap;transform:scaleX(1.06);transform-origin:0 0;">Input Drivers</div>
<div style="position:absolute;left:353px;top:855px;width:300px;height:26px;line-height:26px;text-align:left;padding-left:0px;box-sizing:border-box;font-size:16.4px;font-weight:normal;font-style:normal;color:#444;white-space:nowrap;transform:scaleX(1.005);transform-origin:0 0;">Revenue &amp; Salaries Forecast</div>
<div style="position:absolute;left:584px;top:857px;width:197px;height:25px;background:#FFFFFF;border:1px solid #A8A8A8;border-top:none;border-bottom:none;box-sizing:border-box;"></div>
<div style="position:absolute;left:584px;top:881px;width:197px;height:2px;background:#1E6E3E;"></div>
<div style="position:absolute;left:596px;top:855px;width:200px;height:26px;line-height:26px;text-align:left;padding-left:0px;box-sizing:border-box;font-size:16.5px;font-weight:bold;font-style:normal;color:#217346;white-space:nowrap;transform:scaleX(1.015);transform-origin:0 0;">Customer Acquisition</div>
<div style="position:absolute;left:799px;top:855px;width:300px;height:26px;line-height:26px;text-align:left;padding-left:0px;box-sizing:border-box;font-size:16.4px;font-weight:normal;font-style:normal;color:#444;white-space:nowrap;transform:scaleX(1.054);transform-origin:0 0;">Startup Investment Summary</div>
<div style="position:absolute;left:1054px;top:855px;width:20px;height:26px;line-height:22px;text-align:left;padding-left:0px;box-sizing:border-box;font-size:15px;font-weight:normal;font-style:normal;color:#555;white-space:nowrap;">'</div>
<div style="position:absolute;left:1062px;top:858px;width:30px;height:26px;line-height:24px;text-align:left;padding-left:0px;box-sizing:border-box;font-size:17px;font-weight:bold;font-style:normal;color:#217346;white-space:nowrap;">...</div>
<svg style="position:absolute;left:1088px;top:861px" width="22" height="22" viewBox="0 0 22 22"><circle cx="11" cy="11" r="9.5" fill="none" stroke="#777" stroke-width="1.4"/><path d="M11 6.5v9M6.5 11h9" stroke="#666" stroke-width="1.6"/></svg>
<div style="position:absolute;left:1127px;top:867px;width:2px;height:2px;background:#B4B4B4;"></div>
<div style="position:absolute;left:1127px;top:871px;width:2px;height:2px;background:#B4B4B4;"></div>
<div style="position:absolute;left:1127px;top:875px;width:2px;height:2px;background:#B4B4B4;"></div>
<div style="position:absolute;left:1145px;top:862px;width:726px;height:19px;background:#E8E8E8;"></div>
<div style="position:absolute;left:1145px;top:862px;width:19px;height:19px;background:#FFFFFF;border:1px solid #C8C8C8;box-sizing:border-box;"></div>
<div style="position:absolute;left:1164px;top:862px;width:89px;height:19px;background:#FFFFFF;border:1px solid #ABABAB;box-sizing:border-box;"></div>
<div style="position:absolute;left:1852px;top:862px;width:19px;height:19px;background:#FFFFFF;border:1px solid #C8C8C8;box-sizing:border-box;"></div>
<div style="position:absolute;left:1151px;top:867px;width:0;height:0;border-top:4.5px solid transparent;border-bottom:4.5px solid transparent;border-right:5px solid #6E6E6E;"></div>
<div style="position:absolute;left:1859px;top:867px;width:0;height:0;border-top:4.5px solid transparent;border-bottom:4.5px solid transparent;border-left:5px solid #777;"></div>
</body></html>
